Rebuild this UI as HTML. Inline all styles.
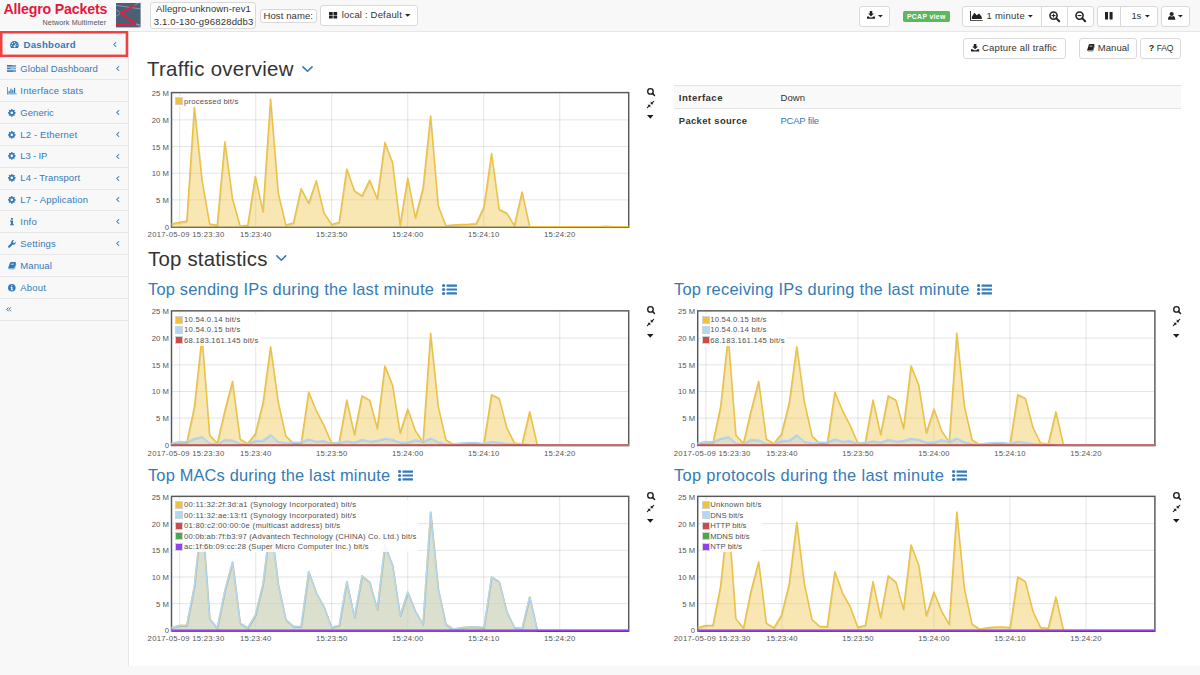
<!DOCTYPE html>
<html lang="en"><head><meta charset="utf-8"><title>Allegro Packets - Dashboard</title>
<style>
html,body{margin:0;padding:0}
body{width:1200px;height:675px;overflow:hidden;position:relative;background:#f8f8f8;font-family:"Liberation Sans", sans-serif;color:#333}
.bx,.ic,.t,.lgbg,.sw,#plots,.grp{position:absolute}
.grp{left:0;top:0;width:1200px;height:675px;display:block}
.bx{box-sizing:border-box}
.t{white-space:pre;font-family:"Liberation Sans", sans-serif}
.ic{display:block;overflow:visible}
.lgbg{background:#fff;opacity:.85}
.sw{width:8px;height:8px;box-sizing:border-box;border:1px solid #d2d2d2;background:#fff}
.sw i{display:block;width:6px;height:6px}
#plots{left:0;top:0}
</style></head>
<body>
<!-- page backgrounds -->
<div class="bx" style="left:0.00px;top:0.00px;width:1200.00px;height:31.00px;background:#f8f8f8;border-bottom:1px solid #e7e7e7;box-sizing:content-box"></div>
<div class="bx" style="left:128.30px;top:31.60px;width:1071.70px;height:634.10px;background:#fff;border-left:1px solid #e7e7e7"></div>
<!-- top navigation bar -->
<header id="topbar" class="grp">
<div class="bx" style="left:150.25px;top:2.25px;width:106.00px;height:26.75px;background:#fff;border:1px solid #d9d9d9;border-radius:3px"></div>
<div class="bx" style="left:260.40px;top:8.50px;width:56.20px;height:14.20px;background:#fff;border:1px solid #d9d9d9;border-radius:3px"></div>
<div class="bx" style="left:319.50px;top:5.40px;width:98.10px;height:20.40px;background:#fff;border:1px solid #d9d9d9;border-radius:3px"></div>
<div class="bx" style="left:858.75px;top:5.60px;width:31.50px;height:21.00px;background:#fff;border:1px solid #d9d9d9;border-radius:3px"></div>
<div class="bx" style="left:903.10px;top:10.60px;width:46.90px;height:11.90px;background:#5cb85c;border-radius:1.8px"></div>
<div class="bx" style="left:962.40px;top:5.60px;width:131.80px;height:21.00px;background:#fff;border:1px solid #d9d9d9;border-radius:3px"></div>
<div class="bx" style="left:1041.00px;top:5.60px;width:26.90px;height:21.00px;border-left:1px solid #d9d9d9;border-right:1px solid #d9d9d9"></div>
<div class="bx" style="left:1097.00px;top:5.60px;width:60.60px;height:21.00px;background:#fff;border:1px solid #d9d9d9;border-radius:3px"></div>
<div class="bx" style="left:1120.20px;top:5.60px;width:1.00px;height:21.00px;border-left:1px solid #d9d9d9"></div>
<div class="bx" style="left:1161.00px;top:5.60px;width:29.40px;height:21.00px;background:#fff;border:1px solid #d9d9d9;border-radius:3px"></div>
<svg class="ic" style="left:116.3px;top:2.9px" width="24.6" height="24.4" viewBox="0 0 24.6 24.4"><rect width="24.6" height="24.4" fill="#4b6075"/><g stroke="#c9d3db" stroke-width="0.55" fill="none" opacity=".85"><path d="M0 2.400L24.600 5.900"/><path d="M0 13.300L4.700 10.300 24.600-1.200"/><path d="M0 6.600L4.700 10.100"/><path d="M19.800 20.700L24.600 24"/><path d="M20 21L24.600 21.900"/></g><path d="M18.700 2.300L4.900 10.200 19.400 20.300" fill="none" stroke="#ea1c3c" stroke-width="1.900" stroke-linejoin="miter"/><path d="M0 21.400L19.600 20.500" fill="none" stroke="#ea1c3c" stroke-width="1.900"/></svg>
<svg class="ic" style="left:329.00px;top:12.00px;color:#222" width="8.20" height="6.40" viewBox="0 0 16 13" fill="#222" stroke="none" preserveAspectRatio="none"><rect x="0" y="0" width="7.300" height="5.900" rx=".6"/><rect x="8.700" y="0" width="7.300" height="5.900" rx=".6"/><rect x="0" y="7.100" width="7.300" height="5.900" rx=".6"/><rect x="8.700" y="7.100" width="7.300" height="5.900" rx=".6"/></svg>
<svg class="ic" style="left:404.60px;top:14.20px;color:#222" width="5.40" height="2.70" viewBox="0 0 16 9" fill="#222" stroke="none" preserveAspectRatio="none"><path d="M0 0h16L8 9z"/></svg>
<svg class="ic" style="left:866.50px;top:11.00px;color:#222" width="8.00" height="7.80" viewBox="0 0 16 15" fill="#222" stroke="none" preserveAspectRatio="none"><path d="M5.500 0h5v5h3.200L8 10.600 2.300 5h3.200z"/><path d="M0 10.400h3.600l2.200 2.100h4.400l2.200-2.100H16V15H0z"/></svg>
<svg class="ic" style="left:877.90px;top:15.00px;color:#222" width="4.80" height="2.60" viewBox="0 0 16 9" fill="#222" stroke="none" preserveAspectRatio="none"><path d="M0 0h16L8 9z"/></svg>
<svg class="ic" style="left:970.40px;top:11.00px;color:#222" width="12.70" height="9.80" viewBox="0 0 18 14" fill="#222" stroke="none" preserveAspectRatio="none"><path d="M0 0h1.300v12.700H18V14H0z"/><path d="M2.600 11.400V8.200L6.300 2.600l3.200 3.600 3.500-2.800 3.700 5v3z"/></svg>
<svg class="ic" style="left:1028.40px;top:15.00px;color:#222" width="4.80" height="2.60" viewBox="0 0 16 9" fill="#222" stroke="none" preserveAspectRatio="none"><path d="M0 0h16L8 9z"/></svg>
<svg class="ic" style="left:1048.90px;top:10.70px;color:#222" width="11.00" height="11.10" viewBox="0 0 16 16" fill="#222" stroke="none" preserveAspectRatio="none"><circle cx="6.600" cy="6.600" r="5.200" fill="none" stroke="currentColor" stroke-width="2.300"/><path d="M10.700 10.700L14.800 14.800" stroke="currentColor" stroke-width="2.800" stroke-linecap="round"/><rect x="3.800" y="5.800" width="5.600" height="1.600"/><rect x="5.800" y="3.800" width="1.600" height="5.600"/></svg>
<svg class="ic" style="left:1075.00px;top:10.70px;color:#222" width="11.00" height="11.10" viewBox="0 0 16 16" fill="#222" stroke="none" preserveAspectRatio="none"><circle cx="6.600" cy="6.600" r="5.200" fill="none" stroke="currentColor" stroke-width="2.300"/><path d="M10.700 10.700L14.800 14.800" stroke="currentColor" stroke-width="2.800" stroke-linecap="round"/><rect x="3.800" y="5.800" width="5.600" height="1.600"/></svg>
<svg class="ic" style="left:1105.20px;top:12.00px;color:#222" width="7.60" height="7.60" viewBox="0 0 12 13" fill="#222" stroke="none" preserveAspectRatio="none"><rect x="0" y="0" width="4.800" height="13" rx=".5"/><rect x="7.200" y="0" width="4.800" height="13" rx=".5"/></svg>
<svg class="ic" style="left:1144.50px;top:15.00px;color:#222" width="4.80" height="2.60" viewBox="0 0 16 9" fill="#222" stroke="none" preserveAspectRatio="none"><path d="M0 0h16L8 9z"/></svg>
<svg class="ic" style="left:1167.90px;top:11.80px;color:#222" width="7.30" height="7.80" viewBox="0 0 12 13" fill="#222" stroke="none" preserveAspectRatio="none"><circle cx="6" cy="3.400" r="3.400"/><path d="M0 13c0-4 1.500-6 3.600-6.300.700.600 1.500.900 2.400.900s1.700-.300 2.400-.900C10.500 7 12 9 12 13z"/></svg>
<svg class="ic" style="left:1178.00px;top:15.00px;color:#222" width="4.80" height="2.60" viewBox="0 0 16 9" fill="#222" stroke="none" preserveAspectRatio="none"><path d="M0 0h16L8 9z"/></svg>
<span class="t" style="left:3.50px;top:0.30px;font-size:14.2px;line-height:18.46px;font-weight:700;letter-spacing:-0.187px;color:#e2193f;">Allegro Packets</span>
<span class="t" style="left:42.50px;top:18.28px;font-size:7.2px;line-height:9.36px;letter-spacing:0.097px;color:#4a5563;">Network Multimeter</span>
<span class="t" style="left:156.00px;top:3.48px;font-size:9.5px;line-height:12.35px;letter-spacing:0.130px;">Allegro-unknown-rev1</span>
<span class="t" style="left:153.75px;top:15.73px;font-size:9.5px;line-height:12.35px;letter-spacing:0.180px;">3.1.0-130-g96828ddb3</span>
<span class="t" style="left:263.50px;top:9.78px;font-size:9.5px;line-height:12.35px;letter-spacing:0.102px;">Host name:</span>
<span class="t" style="left:341.70px;top:9.48px;font-size:9.5px;line-height:12.35px;letter-spacing:0.183px;">local : Default</span>
<span class="t" style="left:906.90px;top:12.80px;font-size:6.87px;line-height:8.93px;font-weight:700;letter-spacing:0.340px;color:#fff;">PCAP view</span>
<span class="t" style="left:986.50px;top:9.98px;font-size:9.5px;line-height:12.35px;letter-spacing:0.258px;">1 minute</span>
<span class="t" style="left:1131.50px;top:9.98px;font-size:9.5px;line-height:12.35px;letter-spacing:-0.217px;">1s</span>
</header>
<!-- sidebar navigation -->
<nav id="sidebar" class="grp">
<div class="bx" style="left:0.00px;top:79.20px;width:128.30px;height:1.00px;background:#e7e7e7"></div>
<div class="bx" style="left:0.00px;top:101.08px;width:128.30px;height:1.00px;background:#e7e7e7"></div>
<div class="bx" style="left:0.00px;top:122.95px;width:128.30px;height:1.00px;background:#e7e7e7"></div>
<div class="bx" style="left:0.00px;top:144.82px;width:128.30px;height:1.00px;background:#e7e7e7"></div>
<div class="bx" style="left:0.00px;top:166.70px;width:128.30px;height:1.00px;background:#e7e7e7"></div>
<div class="bx" style="left:0.00px;top:188.57px;width:128.30px;height:1.00px;background:#e7e7e7"></div>
<div class="bx" style="left:0.00px;top:210.45px;width:128.30px;height:1.00px;background:#e7e7e7"></div>
<div class="bx" style="left:0.00px;top:232.32px;width:128.30px;height:1.00px;background:#e7e7e7"></div>
<div class="bx" style="left:0.00px;top:254.20px;width:128.30px;height:1.00px;background:#e7e7e7"></div>
<div class="bx" style="left:0.00px;top:276.07px;width:128.30px;height:1.00px;background:#e7e7e7"></div>
<div class="bx" style="left:0.00px;top:297.95px;width:128.30px;height:1.00px;background:#e7e7e7"></div>
<div class="bx" style="left:0.00px;top:319.82px;width:128.30px;height:1.00px;background:#e7e7e7"></div>
<svg class="ic" style="left:0;top:31.4px" width="128.2" height="26.1" viewBox="0 0 128.2 26.1"><rect x="1.25" y="1.25" width="125.7" height="23.6" fill="#f8f8f8" stroke="#f04040" stroke-width="2.5"/></svg>
<svg class="ic" style="left:10.00px;top:41.20px;color:#337ab7" width="8.80" height="6.90" viewBox="0 0 16 13" fill="#337ab7" stroke="none" preserveAspectRatio="none"><path d="M8 0a8 8 0 0 1 8 8c0 1.7-.5 3.2-1.4 4.5a1 1 0 0 1-.8.5H2.2a1 1 0 0 1-.8-.5A8 8 0 0 1 8 0z"/><g fill="#f8f8f8"><circle cx="3" cy="8" r="1.1"/><circle cx="4.5" cy="4.5" r="1.1"/><circle cx="8" cy="3" r="1.1"/><circle cx="13" cy="8" r="1.1"/><path d="M10.9 3.6l1 .5-2.3 4.6a1.9 1.9 0 1 1-1.1-.5z"/></g></svg>
<svg class="ic" style="left:113.20px;top:42.40px;color:#337ab7" width="3.60" height="5.00" viewBox="0 0 7 12" fill="#337ab7" stroke="none" preserveAspectRatio="none"><path d="M5.6 1.2L1.4 6l4.2 4.8" fill="none" stroke="currentColor" stroke-width="2.1" stroke-linecap="round" stroke-linejoin="round"/></svg>
<svg class="ic" style="left:7.30px;top:65.30px;color:#337ab7" width="8.80" height="6.90" viewBox="0 0 16 13" fill="#337ab7" stroke="none" preserveAspectRatio="none"><rect x="0" y="0" width="16" height="3.2"/><rect x="0" y="4.9" width="16" height="3.2"/><rect x="0" y="9.8" width="16" height="3.2"/><g fill="#f8f8f8" opacity=".75"><rect x="9" y="1" width="6" height="1.2"/><rect x="6" y="5.9" width="9" height="1.2"/><rect x="11" y="10.8" width="4" height="1.2"/></g></svg>
<svg class="ic" style="left:115.70px;top:66.20px;color:#337ab7" width="3.60" height="5.00" viewBox="0 0 7 12" fill="#337ab7" stroke="none" preserveAspectRatio="none"><path d="M5.6 1.2L1.4 6l4.2 4.8" fill="none" stroke="currentColor" stroke-width="2.1" stroke-linecap="round" stroke-linejoin="round"/></svg>
<svg class="ic" style="left:6.90px;top:86.98px;color:#337ab7" width="9.60" height="7.20" viewBox="0 0 16 13" fill="#337ab7" stroke="none" preserveAspectRatio="none"><path d="M0 0h1.2v11.8H16V13H0z"/><rect x="2.6" y="7" width="2" height="4"/><rect x="5.6" y="3" width="2" height="8"/><rect x="8.6" y="5.2" width="2" height="5.8"/><rect x="11.6" y="1.5" width="2" height="9.5"/></svg>
<svg class="ic" style="left:7.90px;top:108.65px;color:#337ab7" width="7.60" height="7.60" viewBox="0 0 16 16" fill="#337ab7" stroke="none" preserveAspectRatio="none"><path fill-rule="evenodd" d="M6.7 0h2.6l.4 2.1 1.3.55 1.8-1.2 1.85 1.85-1.2 1.8.55 1.3 2.1.4v2.6l-2.1.4-.55 1.3 1.2 1.8-1.85 1.85-1.8-1.2-1.3.55-.4 2.1H6.7l-.4-2.1-1.3-.55-1.8 1.2-1.85-1.85 1.2-1.8-.55-1.3L0 9.3V6.7l2.1-.4.55-1.3-1.2-1.8L3.3 1.35l1.8 1.2 1.3-.55zM8 5.2a2.8 2.8 0 1 0 0 5.6 2.8 2.8 0 0 0 0-5.6z"/></svg>
<svg class="ic" style="left:115.70px;top:109.95px;color:#337ab7" width="3.60" height="5.00" viewBox="0 0 7 12" fill="#337ab7" stroke="none" preserveAspectRatio="none"><path d="M5.6 1.2L1.4 6l4.2 4.8" fill="none" stroke="currentColor" stroke-width="2.1" stroke-linecap="round" stroke-linejoin="round"/></svg>
<svg class="ic" style="left:7.90px;top:130.52px;color:#337ab7" width="7.60" height="7.60" viewBox="0 0 16 16" fill="#337ab7" stroke="none" preserveAspectRatio="none"><path fill-rule="evenodd" d="M6.7 0h2.6l.4 2.1 1.3.55 1.8-1.2 1.85 1.85-1.2 1.8.55 1.3 2.1.4v2.6l-2.1.4-.55 1.3 1.2 1.8-1.85 1.85-1.8-1.2-1.3.55-.4 2.1H6.7l-.4-2.1-1.3-.55-1.8 1.2-1.85-1.85 1.2-1.8-.55-1.3L0 9.3V6.7l2.1-.4.55-1.3-1.2-1.8L3.3 1.35l1.8 1.2 1.3-.55zM8 5.2a2.8 2.8 0 1 0 0 5.6 2.8 2.8 0 0 0 0-5.6z"/></svg>
<svg class="ic" style="left:115.70px;top:131.82px;color:#337ab7" width="3.60" height="5.00" viewBox="0 0 7 12" fill="#337ab7" stroke="none" preserveAspectRatio="none"><path d="M5.6 1.2L1.4 6l4.2 4.8" fill="none" stroke="currentColor" stroke-width="2.1" stroke-linecap="round" stroke-linejoin="round"/></svg>
<svg class="ic" style="left:7.90px;top:152.40px;color:#337ab7" width="7.60" height="7.60" viewBox="0 0 16 16" fill="#337ab7" stroke="none" preserveAspectRatio="none"><path fill-rule="evenodd" d="M6.7 0h2.6l.4 2.1 1.3.55 1.8-1.2 1.85 1.85-1.2 1.8.55 1.3 2.1.4v2.6l-2.1.4-.55 1.3 1.2 1.8-1.85 1.85-1.8-1.2-1.3.55-.4 2.1H6.7l-.4-2.1-1.3-.55-1.8 1.2-1.85-1.85 1.2-1.8-.55-1.3L0 9.3V6.7l2.1-.4.55-1.3-1.2-1.8L3.3 1.35l1.8 1.2 1.3-.55zM8 5.2a2.8 2.8 0 1 0 0 5.6 2.8 2.8 0 0 0 0-5.6z"/></svg>
<svg class="ic" style="left:115.70px;top:153.70px;color:#337ab7" width="3.60" height="5.00" viewBox="0 0 7 12" fill="#337ab7" stroke="none" preserveAspectRatio="none"><path d="M5.6 1.2L1.4 6l4.2 4.8" fill="none" stroke="currentColor" stroke-width="2.1" stroke-linecap="round" stroke-linejoin="round"/></svg>
<svg class="ic" style="left:7.90px;top:174.27px;color:#337ab7" width="7.60" height="7.60" viewBox="0 0 16 16" fill="#337ab7" stroke="none" preserveAspectRatio="none"><path fill-rule="evenodd" d="M6.7 0h2.6l.4 2.1 1.3.55 1.8-1.2 1.85 1.85-1.2 1.8.55 1.3 2.1.4v2.6l-2.1.4-.55 1.3 1.2 1.8-1.85 1.85-1.8-1.2-1.3.55-.4 2.1H6.7l-.4-2.1-1.3-.55-1.8 1.2-1.85-1.85 1.2-1.8-.55-1.3L0 9.3V6.7l2.1-.4.55-1.3-1.2-1.8L3.3 1.35l1.8 1.2 1.3-.55zM8 5.2a2.8 2.8 0 1 0 0 5.6 2.8 2.8 0 0 0 0-5.6z"/></svg>
<svg class="ic" style="left:115.70px;top:175.57px;color:#337ab7" width="3.60" height="5.00" viewBox="0 0 7 12" fill="#337ab7" stroke="none" preserveAspectRatio="none"><path d="M5.6 1.2L1.4 6l4.2 4.8" fill="none" stroke="currentColor" stroke-width="2.1" stroke-linecap="round" stroke-linejoin="round"/></svg>
<svg class="ic" style="left:7.90px;top:196.15px;color:#337ab7" width="7.60" height="7.60" viewBox="0 0 16 16" fill="#337ab7" stroke="none" preserveAspectRatio="none"><path fill-rule="evenodd" d="M6.7 0h2.6l.4 2.1 1.3.55 1.8-1.2 1.85 1.85-1.2 1.8.55 1.3 2.1.4v2.6l-2.1.4-.55 1.3 1.2 1.8-1.85 1.85-1.8-1.2-1.3.55-.4 2.1H6.7l-.4-2.1-1.3-.55-1.8 1.2-1.85-1.85 1.2-1.8-.55-1.3L0 9.3V6.7l2.1-.4.55-1.3-1.2-1.8L3.3 1.35l1.8 1.2 1.3-.55zM8 5.2a2.8 2.8 0 1 0 0 5.6 2.8 2.8 0 0 0 0-5.6z"/></svg>
<svg class="ic" style="left:115.70px;top:197.45px;color:#337ab7" width="3.60" height="5.00" viewBox="0 0 7 12" fill="#337ab7" stroke="none" preserveAspectRatio="none"><path d="M5.6 1.2L1.4 6l4.2 4.8" fill="none" stroke="currentColor" stroke-width="2.1" stroke-linecap="round" stroke-linejoin="round"/></svg>
<svg class="ic" style="left:9.80px;top:218.12px;color:#337ab7" width="3.90" height="7.30" viewBox="0 0 6 14" fill="#337ab7" stroke="none" preserveAspectRatio="none"><rect x="1.4" y="0" width="3.2" height="3.2"/><path d="M0 5h4.6v6.8H6V14H0v-2.2h1.4V7.2H0z"/></svg>
<svg class="ic" style="left:115.70px;top:219.32px;color:#337ab7" width="3.60" height="5.00" viewBox="0 0 7 12" fill="#337ab7" stroke="none" preserveAspectRatio="none"><path d="M5.6 1.2L1.4 6l4.2 4.8" fill="none" stroke="currentColor" stroke-width="2.1" stroke-linecap="round" stroke-linejoin="round"/></svg>
<svg class="ic" style="left:7.70px;top:239.90px;color:#337ab7" width="7.80" height="7.80" viewBox="0 0 16 16" fill="#337ab7" stroke="none" preserveAspectRatio="none"><path d="M15.6 3.3l-2.7 2.7-2.3-.6-.6-2.3L12.7.4a4.6 4.6 0 0 0-6 5.8L.6 12.3a2.2 2.2 0 0 0 3.1 3.1l6.1-6.1a4.6 4.6 0 0 0 5.8-6z"/></svg>
<svg class="ic" style="left:115.70px;top:241.20px;color:#337ab7" width="3.60" height="5.00" viewBox="0 0 7 12" fill="#337ab7" stroke="none" preserveAspectRatio="none"><path d="M5.6 1.2L1.4 6l4.2 4.8" fill="none" stroke="currentColor" stroke-width="2.1" stroke-linecap="round" stroke-linejoin="round"/></svg>
<svg class="ic" style="left:7.60px;top:261.97px;color:#337ab7" width="8.20" height="7.20" viewBox="0 0 16 14" fill="#337ab7" stroke="none" preserveAspectRatio="none"><path d="M15.7 3.4c.3.4.4.9.2 1.4l-2.6 8.1c-.2.7-.9 1.1-1.6 1.1H3c-1 0-2-.8-2.4-1.800-.2-.5-.2-.9 0-1.300L3.300 2.700C3.600 1.500 4.600 0 5.800 0h8.300c.5 0 .9.200 1.100.500.300.400.300.900.200 1.400l-2.800 8.900c-.2.500-.5.700-1 .700H2.600c-.300 0-.500.100-.400.500.200.700.800.800 1.300.800h8.400c.300 0 .600-.200.700-.500l2.700-8.700c.1-.100.100-.300.100-.500.100.100.200.200.300.300z"/><g fill="#f8f8f8"><path d="M6.200 3.200h5.800l-.250.850H5.950zM5.650 5h5.800l-.250.850H5.400z"/></g></svg>
<svg class="ic" style="left:7.90px;top:283.65px;color:#337ab7" width="7.60" height="7.60" viewBox="0 0 16 16" fill="#337ab7" stroke="none" preserveAspectRatio="none"><circle cx="8" cy="8" r="8"/><g fill="#f8f8f8"><rect x="6.7" y="2.6" width="2.6" height="2.4"/><path d="M5.600 6.400h3.700v5h1.100v1.800H5.600v-1.800h1.100V8.200H5.600z"/></g></svg>
<svg class="ic" style="left:6.20px;top:306.90px;color:#337ab7" width="5.40" height="4.60" viewBox="0 0 14 12" fill="#337ab7" stroke="none" preserveAspectRatio="none"><path d="M6 1.5L2 6l4 4.5M12 1.5L8 6l4 4.5" fill="none" stroke="currentColor" stroke-width="2.5" stroke-linecap="round" stroke-linejoin="round"/></svg>
<span class="t" style="left:23.50px;top:38.98px;font-size:9.6px;line-height:12.48px;font-weight:700;letter-spacing:0.262px;color:#337ab7;">Dashboard</span>
<span class="t" style="left:20.30px;top:62.98px;font-size:9.5px;line-height:12.35px;letter-spacing:0.064px;color:#337ab7;">Global Dashboard</span>
<span class="t" style="left:20.30px;top:84.86px;font-size:9.5px;line-height:12.35px;letter-spacing:0.229px;color:#337ab7;">Interface stats</span>
<span class="t" style="left:20.30px;top:106.73px;font-size:9.5px;line-height:12.35px;letter-spacing:0.048px;color:#337ab7;">Generic</span>
<span class="t" style="left:20.30px;top:128.61px;font-size:9.5px;line-height:12.35px;letter-spacing:0.152px;color:#337ab7;">L2 - Ethernet</span>
<span class="t" style="left:20.30px;top:150.48px;font-size:9.5px;line-height:12.35px;letter-spacing:-0.141px;color:#337ab7;">L3 - IP</span>
<span class="t" style="left:20.30px;top:172.36px;font-size:9.5px;line-height:12.35px;letter-spacing:0.047px;color:#337ab7;">L4 - Transport</span>
<span class="t" style="left:20.30px;top:194.23px;font-size:9.5px;line-height:12.35px;letter-spacing:0.184px;color:#337ab7;">L7 - Application</span>
<span class="t" style="left:20.30px;top:216.11px;font-size:9.5px;line-height:12.35px;letter-spacing:0.189px;color:#337ab7;">Info</span>
<span class="t" style="left:20.30px;top:237.98px;font-size:9.5px;line-height:12.35px;letter-spacing:0.172px;color:#337ab7;">Settings</span>
<span class="t" style="left:20.30px;top:259.86px;font-size:9.5px;line-height:12.35px;letter-spacing:0.074px;color:#337ab7;">Manual</span>
<span class="t" style="left:20.30px;top:281.73px;font-size:9.5px;line-height:12.35px;letter-spacing:0.195px;color:#337ab7;">About</span>
</nav>
<!-- dashboard content: buttons, info table, headings, charts -->
<main id="page" class="grp">
<div class="bx" style="left:962.50px;top:37.50px;width:103.00px;height:21.00px;background:#fff;border:1px solid #d9d9d9;border-radius:3px"></div>
<div class="bx" style="left:1078.75px;top:37.50px;width:58.50px;height:21.00px;background:#fff;border:1px solid #d9d9d9;border-radius:3px"></div>
<div class="bx" style="left:1140.25px;top:37.50px;width:41.00px;height:21.00px;background:#fff;border:1px solid #d9d9d9;border-radius:3px"></div>
<div class="bx" style="left:673.75px;top:85.30px;width:507.50px;height:1.00px;background:#e3e3e3"></div>
<div class="bx" style="left:673.75px;top:86.20px;width:507.50px;height:22.50px;background:#f9f9f9"></div>
<div class="bx" style="left:673.75px;top:108.40px;width:507.50px;height:1.00px;background:#e3e3e3"></div>
<svg id="plots" width="1200" height="675" viewBox="0 0 1200 675">
<rect x="171.50" y="92.60" width="457.20" height="134.60" fill="#fff"/>
<line x1="179.75" y1="92.60" x2="179.75" y2="227.20" stroke="#545454" stroke-opacity="0.22" stroke-width="0.7"/>
<line x1="255.75" y1="92.60" x2="255.75" y2="227.20" stroke="#545454" stroke-opacity="0.22" stroke-width="0.7"/>
<line x1="331.75" y1="92.60" x2="331.75" y2="227.20" stroke="#545454" stroke-opacity="0.22" stroke-width="0.7"/>
<line x1="407.75" y1="92.60" x2="407.75" y2="227.20" stroke="#545454" stroke-opacity="0.22" stroke-width="0.7"/>
<line x1="483.75" y1="92.60" x2="483.75" y2="227.20" stroke="#545454" stroke-opacity="0.22" stroke-width="0.7"/>
<line x1="559.75" y1="92.60" x2="559.75" y2="227.20" stroke="#545454" stroke-opacity="0.22" stroke-width="0.7"/>
<line x1="171.50" y1="199.92" x2="628.70" y2="199.92" stroke="#545454" stroke-opacity="0.22" stroke-width="0.7"/>
<line x1="171.50" y1="173.24" x2="628.70" y2="173.24" stroke="#545454" stroke-opacity="0.22" stroke-width="0.7"/>
<line x1="171.50" y1="146.56" x2="628.70" y2="146.56" stroke="#545454" stroke-opacity="0.22" stroke-width="0.7"/>
<line x1="171.50" y1="119.88" x2="628.70" y2="119.88" stroke="#545454" stroke-opacity="0.22" stroke-width="0.7"/>
<rect x="171.50" y="92.60" width="457.20" height="134.60" fill="none" stroke="#585858" stroke-width="1.45"/>
<clipPath id="cl171_92"><rect x="170.70" y="91.60" width="458.80" height="136.80"/></clipPath>
<g clip-path="url(#cl171_92)">
<polygon points="171.50,227.20 171.50,223.93 179.12,222.33 186.74,221.26 194.36,107.07 201.98,180.18 209.60,223.93 217.22,225.27 224.84,141.76 232.46,198.85 240.08,226.07 247.70,225.27 255.32,176.44 262.94,211.66 270.56,99.07 278.18,192.98 285.80,225.00 293.42,222.86 301.04,188.71 308.66,203.12 316.28,180.71 323.90,212.73 331.52,224.47 339.14,222.33 346.76,168.97 354.38,190.85 362.00,195.92 369.62,180.18 377.24,198.85 384.86,142.56 392.48,162.57 400.10,225.00 407.72,178.04 415.34,217.80 422.96,188.71 430.58,115.88 438.20,205.79 445.82,225.80 453.44,225.00 461.06,224.47 468.68,224.20 476.30,223.67 483.92,206.86 491.54,153.50 499.16,209.52 506.78,213.26 514.40,225.53 522.02,191.92 529.64,226.60 537.26,226.60 544.88,226.60 552.50,226.60 560.12,226.60 567.74,226.60 575.36,226.60 582.98,226.60 590.60,226.60 598.22,226.60 605.84,226.28 613.46,226.60 621.08,226.60 628.70,226.60 628.70,227.20" fill="#edc240" fill-opacity="0.4"/>
<polyline points="172.00,224.83 179.62,223.23 187.24,222.16 194.86,107.97 202.48,181.08 210.10,224.83 217.72,226.17 225.34,142.66 232.96,199.75 240.58,226.97 248.20,226.17 255.82,177.34 263.44,212.56 271.06,99.97 278.68,193.88 286.30,225.90 293.92,223.76 301.54,189.61 309.16,204.02 316.78,181.61 324.40,213.63 332.02,225.37 339.64,223.23 347.26,169.87 354.88,191.75 362.50,196.82 370.12,181.08 377.74,199.75 385.36,143.46 392.98,163.47 400.60,225.90 408.22,178.94 415.84,218.70 423.46,189.61 431.08,116.78 438.70,206.69 446.32,226.70 453.94,225.90 461.56,225.37 469.18,225.10 476.80,224.57 484.42,207.76 492.04,154.40 499.66,210.42 507.28,214.16 514.90,226.43 522.52,192.82 530.14,227.50 537.76,227.50 545.38,227.50 553.00,227.50 560.62,227.50 568.24,227.50 575.86,227.50 583.48,227.50 591.10,227.50 598.72,227.50 606.34,227.18 613.96,227.50 621.58,227.50 629.20,227.50" fill="none" stroke="#000" stroke-opacity="0.10" stroke-width="1.45" stroke-linejoin="round"/>
<polyline points="171.50,223.93 179.12,222.33 186.74,221.26 194.36,107.07 201.98,180.18 209.60,223.93 217.22,225.27 224.84,141.76 232.46,198.85 240.08,226.07 247.70,225.27 255.32,176.44 262.94,211.66 270.56,99.07 278.18,192.98 285.80,225.00 293.42,222.86 301.04,188.71 308.66,203.12 316.28,180.71 323.90,212.73 331.52,224.47 339.14,222.33 346.76,168.97 354.38,190.85 362.00,195.92 369.62,180.18 377.24,198.85 384.86,142.56 392.48,162.57 400.10,225.00 407.72,178.04 415.34,217.80 422.96,188.71 430.58,115.88 438.20,205.79 445.82,225.80 453.44,225.00 461.06,224.47 468.68,224.20 476.30,223.67 483.92,206.86 491.54,153.50 499.16,209.52 506.78,213.26 514.40,225.53 522.02,191.92 529.64,226.60 537.26,226.60 544.88,226.60 552.50,226.60 560.12,226.60 567.74,226.60 575.36,226.60 582.98,226.60 590.60,226.60 598.22,226.60 605.84,226.28 613.46,226.60 621.08,226.60 628.70,226.60" fill="none" stroke="#edc240" stroke-width="1.45" stroke-linejoin="round"/>
</g>
<rect x="171.50" y="310.85" width="457.20" height="134.60" fill="#fff"/>
<line x1="179.75" y1="310.85" x2="179.75" y2="445.45" stroke="#545454" stroke-opacity="0.22" stroke-width="0.7"/>
<line x1="255.75" y1="310.85" x2="255.75" y2="445.45" stroke="#545454" stroke-opacity="0.22" stroke-width="0.7"/>
<line x1="331.75" y1="310.85" x2="331.75" y2="445.45" stroke="#545454" stroke-opacity="0.22" stroke-width="0.7"/>
<line x1="407.75" y1="310.85" x2="407.75" y2="445.45" stroke="#545454" stroke-opacity="0.22" stroke-width="0.7"/>
<line x1="483.75" y1="310.85" x2="483.75" y2="445.45" stroke="#545454" stroke-opacity="0.22" stroke-width="0.7"/>
<line x1="559.75" y1="310.85" x2="559.75" y2="445.45" stroke="#545454" stroke-opacity="0.22" stroke-width="0.7"/>
<line x1="171.50" y1="418.17" x2="628.70" y2="418.17" stroke="#545454" stroke-opacity="0.22" stroke-width="0.7"/>
<line x1="171.50" y1="391.49" x2="628.70" y2="391.49" stroke="#545454" stroke-opacity="0.22" stroke-width="0.7"/>
<line x1="171.50" y1="364.81" x2="628.70" y2="364.81" stroke="#545454" stroke-opacity="0.22" stroke-width="0.7"/>
<line x1="171.50" y1="338.13" x2="628.70" y2="338.13" stroke="#545454" stroke-opacity="0.22" stroke-width="0.7"/>
<rect x="171.50" y="310.85" width="457.20" height="134.60" fill="none" stroke="#585858" stroke-width="1.45"/>
<clipPath id="cl171_310"><rect x="170.70" y="309.85" width="458.80" height="136.80"/></clipPath>
<g clip-path="url(#cl171_310)">
<polygon points="171.50,445.45 171.50,443.78 179.12,443.36 186.74,442.98 194.36,406.96 201.98,336.53 209.60,434.98 217.22,443.36 224.84,410.70 232.46,381.35 240.08,439.14 247.70,443.52 255.32,433.86 262.94,403.23 270.56,346.67 278.18,402.16 285.80,435.94 293.42,443.36 301.04,444.05 308.66,392.02 316.28,410.70 323.90,425.37 331.52,442.98 339.14,442.18 346.76,400.03 354.38,434.44 362.00,395.76 369.62,400.03 377.24,428.31 384.86,365.88 392.48,385.09 400.10,432.79 407.72,409.10 415.34,430.66 422.96,442.18 430.58,333.33 438.20,406.43 445.82,439.78 453.44,444.42 461.06,444.05 468.68,443.78 476.30,443.78 483.92,443.36 491.54,394.69 499.16,398.43 506.78,427.77 514.40,442.98 522.02,444.05 529.64,411.77 537.26,444.85 544.88,444.85 552.50,444.85 560.12,444.85 567.74,444.85 575.36,444.85 582.98,444.85 590.60,444.85 598.22,444.85 605.84,444.85 613.46,444.85 621.08,444.85 628.70,444.85 628.70,445.45" fill="#edc240" fill-opacity="0.4"/>
<polyline points="172.00,444.68 179.62,444.26 187.24,443.88 194.86,407.86 202.48,337.43 210.10,435.88 217.72,444.26 225.34,411.60 232.96,382.25 240.58,440.04 248.20,444.42 255.82,434.76 263.44,404.13 271.06,347.57 278.68,403.06 286.30,436.84 293.92,444.26 301.54,444.95 309.16,392.92 316.78,411.60 324.40,426.27 332.02,443.88 339.64,443.08 347.26,400.93 354.88,435.34 362.50,396.66 370.12,400.93 377.74,429.21 385.36,366.78 392.98,385.99 400.60,433.69 408.22,410.00 415.84,431.56 423.46,443.08 431.08,334.23 438.70,407.33 446.32,440.68 453.94,445.32 461.56,444.95 469.18,444.68 476.80,444.68 484.42,444.26 492.04,395.59 499.66,399.33 507.28,428.67 514.90,443.88 522.52,444.95 530.14,412.67 537.76,445.75 545.38,445.75 553.00,445.75 560.62,445.75 568.24,445.75 575.86,445.75 583.48,445.75 591.10,445.75 598.72,445.75 606.34,445.75 613.96,445.75 621.58,445.75 629.20,445.75" fill="none" stroke="#000" stroke-opacity="0.10" stroke-width="1.45" stroke-linejoin="round"/>
<polyline points="171.50,443.78 179.12,443.36 186.74,442.98 194.36,406.96 201.98,336.53 209.60,434.98 217.22,443.36 224.84,410.70 232.46,381.35 240.08,439.14 247.70,443.52 255.32,433.86 262.94,403.23 270.56,346.67 278.18,402.16 285.80,435.94 293.42,443.36 301.04,444.05 308.66,392.02 316.28,410.70 323.90,425.37 331.52,442.98 339.14,442.18 346.76,400.03 354.38,434.44 362.00,395.76 369.62,400.03 377.24,428.31 384.86,365.88 392.48,385.09 400.10,432.79 407.72,409.10 415.34,430.66 422.96,442.18 430.58,333.33 438.20,406.43 445.82,439.78 453.44,444.42 461.06,444.05 468.68,443.78 476.30,443.78 483.92,443.36 491.54,394.69 499.16,398.43 506.78,427.77 514.40,442.98 522.02,444.05 529.64,411.77 537.26,444.85 544.88,444.85 552.50,444.85 560.12,444.85 567.74,444.85 575.36,444.85 582.98,444.85 590.60,444.85 598.22,444.85 605.84,444.85 613.46,444.85 621.08,444.85 628.70,444.85" fill="none" stroke="#edc240" stroke-width="1.45" stroke-linejoin="round"/>
<polygon points="171.50,445.45 171.50,443.25 179.12,441.49 186.74,441.65 194.36,438.45 201.98,436.58 209.60,442.98 217.22,444.05 224.84,439.35 232.46,440.05 240.08,443.36 247.70,443.78 255.32,440.58 262.94,440.21 270.56,434.87 278.18,441.49 285.80,442.98 293.42,442.29 301.04,441.92 308.66,438.98 316.28,441.49 323.90,440.58 331.52,443.57 339.14,442.50 346.76,440.85 354.38,442.29 362.00,439.35 369.62,441.27 377.24,440.42 384.86,438.45 392.48,439.35 400.10,442.29 407.72,442.29 415.34,439.78 422.96,441.49 430.58,438.07 438.20,441.92 445.82,443.78 453.44,444.05 461.06,442.98 468.68,442.50 476.30,442.50 483.92,443.57 491.54,441.49 499.16,442.50 506.78,443.36 514.40,443.78 522.02,443.78 529.64,444.42 537.26,444.85 544.88,444.85 552.50,444.85 560.12,444.85 567.74,444.85 575.36,444.85 582.98,444.85 590.60,444.85 598.22,444.85 605.84,444.85 613.46,444.85 621.08,444.85 628.70,444.85 628.70,445.45" fill="#afd8f8" fill-opacity="0.4"/>
<polyline points="172.00,444.15 179.62,442.39 187.24,442.55 194.86,439.35 202.48,437.48 210.10,443.88 217.72,444.95 225.34,440.25 232.96,440.95 240.58,444.26 248.20,444.68 255.82,441.48 263.44,441.11 271.06,435.77 278.68,442.39 286.30,443.88 293.92,443.19 301.54,442.82 309.16,439.88 316.78,442.39 324.40,441.48 332.02,444.47 339.64,443.40 347.26,441.75 354.88,443.19 362.50,440.25 370.12,442.17 377.74,441.32 385.36,439.35 392.98,440.25 400.60,443.19 408.22,443.19 415.84,440.68 423.46,442.39 431.08,438.97 438.70,442.82 446.32,444.68 453.94,444.95 461.56,443.88 469.18,443.40 476.80,443.40 484.42,444.47 492.04,442.39 499.66,443.40 507.28,444.26 514.90,444.68 522.52,444.68 530.14,445.32 537.76,445.75 545.38,445.75 553.00,445.75 560.62,445.75 568.24,445.75 575.86,445.75 583.48,445.75 591.10,445.75 598.72,445.75 606.34,445.75 613.96,445.75 621.58,445.75 629.20,445.75" fill="none" stroke="#000" stroke-opacity="0.10" stroke-width="1.45" stroke-linejoin="round"/>
<polyline points="171.50,443.25 179.12,441.49 186.74,441.65 194.36,438.45 201.98,436.58 209.60,442.98 217.22,444.05 224.84,439.35 232.46,440.05 240.08,443.36 247.70,443.78 255.32,440.58 262.94,440.21 270.56,434.87 278.18,441.49 285.80,442.98 293.42,442.29 301.04,441.92 308.66,438.98 316.28,441.49 323.90,440.58 331.52,443.57 339.14,442.50 346.76,440.85 354.38,442.29 362.00,439.35 369.62,441.27 377.24,440.42 384.86,438.45 392.48,439.35 400.10,442.29 407.72,442.29 415.34,439.78 422.96,441.49 430.58,438.07 438.20,441.92 445.82,443.78 453.44,444.05 461.06,442.98 468.68,442.50 476.30,442.50 483.92,443.57 491.54,441.49 499.16,442.50 506.78,443.36 514.40,443.78 522.02,443.78 529.64,444.42 537.26,444.85 544.88,444.85 552.50,444.85 560.12,444.85 567.74,444.85 575.36,444.85 582.98,444.85 590.60,444.85 598.22,444.85 605.84,444.85 613.46,444.85 621.08,444.85 628.70,444.85" fill="none" stroke="#afd8f8" stroke-width="1.45" stroke-linejoin="round"/>
<polyline points="172.00,445.75 179.62,445.75 187.24,445.75 194.86,445.75 202.48,445.75 210.10,445.75 217.72,445.75 225.34,445.75 232.96,445.75 240.58,445.75 248.20,445.75 255.82,445.75 263.44,445.75 271.06,445.75 278.68,445.75 286.30,445.75 293.92,445.75 301.54,445.75 309.16,445.75 316.78,445.75 324.40,445.75 332.02,445.75 339.64,445.75 347.26,445.75 354.88,445.75 362.50,445.75 370.12,445.75 377.74,445.75 385.36,445.75 392.98,445.75 400.60,445.75 408.22,445.75 415.84,445.75 423.46,445.75 431.08,445.75 438.70,445.75 446.32,445.75 453.94,445.75 461.56,445.75 469.18,445.75 476.80,445.75 484.42,445.75 492.04,445.75 499.66,445.75 507.28,445.75 514.90,445.75 522.52,445.75 530.14,445.75 537.76,445.75 545.38,445.75 553.00,445.75 560.62,445.75 568.24,445.75 575.86,445.75 583.48,445.75 591.10,445.75 598.72,445.75 606.34,445.75 613.96,445.75 621.58,445.75 629.20,445.75" fill="none" stroke="#000" stroke-opacity="0.10" stroke-width="1.45" stroke-linejoin="round"/>
<polyline points="171.50,444.85 179.12,444.85 186.74,444.85 194.36,444.85 201.98,444.85 209.60,444.85 217.22,444.85 224.84,444.85 232.46,444.85 240.08,444.85 247.70,444.85 255.32,444.85 262.94,444.85 270.56,444.85 278.18,444.85 285.80,444.85 293.42,444.85 301.04,444.85 308.66,444.85 316.28,444.85 323.90,444.85 331.52,444.85 339.14,444.85 346.76,444.85 354.38,444.85 362.00,444.85 369.62,444.85 377.24,444.85 384.86,444.85 392.48,444.85 400.10,444.85 407.72,444.85 415.34,444.85 422.96,444.85 430.58,444.85 438.20,444.85 445.82,444.85 453.44,444.85 461.06,444.85 468.68,444.85 476.30,444.85 483.92,444.85 491.54,444.85 499.16,444.85 506.78,444.85 514.40,444.85 522.02,444.85 529.64,444.85 537.26,444.85 544.88,444.85 552.50,444.85 560.12,444.85 567.74,444.85 575.36,444.85 582.98,444.85 590.60,444.85 598.22,444.85 605.84,444.85 613.46,444.85 621.08,444.85 628.70,444.85" fill="none" stroke="#cb4b4b" stroke-width="1.45" stroke-linejoin="round"/>
</g>
<rect x="697.70" y="310.85" width="457.20" height="134.60" fill="#fff"/>
<line x1="705.95" y1="310.85" x2="705.95" y2="445.45" stroke="#545454" stroke-opacity="0.22" stroke-width="0.7"/>
<line x1="781.95" y1="310.85" x2="781.95" y2="445.45" stroke="#545454" stroke-opacity="0.22" stroke-width="0.7"/>
<line x1="857.95" y1="310.85" x2="857.95" y2="445.45" stroke="#545454" stroke-opacity="0.22" stroke-width="0.7"/>
<line x1="933.95" y1="310.85" x2="933.95" y2="445.45" stroke="#545454" stroke-opacity="0.22" stroke-width="0.7"/>
<line x1="1009.95" y1="310.85" x2="1009.95" y2="445.45" stroke="#545454" stroke-opacity="0.22" stroke-width="0.7"/>
<line x1="1085.95" y1="310.85" x2="1085.95" y2="445.45" stroke="#545454" stroke-opacity="0.22" stroke-width="0.7"/>
<line x1="697.70" y1="418.17" x2="1154.90" y2="418.17" stroke="#545454" stroke-opacity="0.22" stroke-width="0.7"/>
<line x1="697.70" y1="391.49" x2="1154.90" y2="391.49" stroke="#545454" stroke-opacity="0.22" stroke-width="0.7"/>
<line x1="697.70" y1="364.81" x2="1154.90" y2="364.81" stroke="#545454" stroke-opacity="0.22" stroke-width="0.7"/>
<line x1="697.70" y1="338.13" x2="1154.90" y2="338.13" stroke="#545454" stroke-opacity="0.22" stroke-width="0.7"/>
<rect x="697.70" y="310.85" width="457.20" height="134.60" fill="none" stroke="#585858" stroke-width="1.45"/>
<clipPath id="cl697_310"><rect x="696.90" y="309.85" width="458.80" height="136.80"/></clipPath>
<g clip-path="url(#cl697_310)">
<polygon points="697.70,445.45 697.70,443.78 705.32,443.36 712.94,442.98 720.56,406.96 728.18,336.53 735.80,434.98 743.42,443.36 751.04,410.70 758.66,381.35 766.28,439.14 773.90,443.52 781.52,433.86 789.14,403.23 796.76,346.67 804.38,402.16 812.00,435.94 819.62,443.36 827.24,444.05 834.86,392.02 842.48,410.70 850.10,425.37 857.72,442.98 865.34,442.18 872.96,400.03 880.58,434.44 888.20,395.76 895.82,400.03 903.44,428.31 911.06,365.88 918.68,385.09 926.30,432.79 933.92,409.10 941.54,430.66 949.16,442.18 956.78,333.33 964.40,406.43 972.02,439.78 979.64,444.42 987.26,444.05 994.88,443.78 1002.50,443.78 1010.12,443.36 1017.74,394.69 1025.36,398.43 1032.98,427.77 1040.60,442.98 1048.22,444.05 1055.84,411.77 1063.46,444.85 1071.08,444.85 1078.70,444.85 1086.32,444.85 1093.94,444.85 1101.56,444.85 1109.18,444.85 1116.80,444.85 1124.42,444.85 1132.04,444.85 1139.66,444.85 1147.28,444.85 1154.90,444.85 1154.90,445.45" fill="#edc240" fill-opacity="0.4"/>
<polyline points="698.20,444.68 705.82,444.26 713.44,443.88 721.06,407.86 728.68,337.43 736.30,435.88 743.92,444.26 751.54,411.60 759.16,382.25 766.78,440.04 774.40,444.42 782.02,434.76 789.64,404.13 797.26,347.57 804.88,403.06 812.50,436.84 820.12,444.26 827.74,444.95 835.36,392.92 842.98,411.60 850.60,426.27 858.22,443.88 865.84,443.08 873.46,400.93 881.08,435.34 888.70,396.66 896.32,400.93 903.94,429.21 911.56,366.78 919.18,385.99 926.80,433.69 934.42,410.00 942.04,431.56 949.66,443.08 957.28,334.23 964.90,407.33 972.52,440.68 980.14,445.32 987.76,444.95 995.38,444.68 1003.00,444.68 1010.62,444.26 1018.24,395.59 1025.86,399.33 1033.48,428.67 1041.10,443.88 1048.72,444.95 1056.34,412.67 1063.96,445.75 1071.58,445.75 1079.20,445.75 1086.82,445.75 1094.44,445.75 1102.06,445.75 1109.68,445.75 1117.30,445.75 1124.92,445.75 1132.54,445.75 1140.16,445.75 1147.78,445.75 1155.40,445.75" fill="none" stroke="#000" stroke-opacity="0.10" stroke-width="1.45" stroke-linejoin="round"/>
<polyline points="697.70,443.78 705.32,443.36 712.94,442.98 720.56,406.96 728.18,336.53 735.80,434.98 743.42,443.36 751.04,410.70 758.66,381.35 766.28,439.14 773.90,443.52 781.52,433.86 789.14,403.23 796.76,346.67 804.38,402.16 812.00,435.94 819.62,443.36 827.24,444.05 834.86,392.02 842.48,410.70 850.10,425.37 857.72,442.98 865.34,442.18 872.96,400.03 880.58,434.44 888.20,395.76 895.82,400.03 903.44,428.31 911.06,365.88 918.68,385.09 926.30,432.79 933.92,409.10 941.54,430.66 949.16,442.18 956.78,333.33 964.40,406.43 972.02,439.78 979.64,444.42 987.26,444.05 994.88,443.78 1002.50,443.78 1010.12,443.36 1017.74,394.69 1025.36,398.43 1032.98,427.77 1040.60,442.98 1048.22,444.05 1055.84,411.77 1063.46,444.85 1071.08,444.85 1078.70,444.85 1086.32,444.85 1093.94,444.85 1101.56,444.85 1109.18,444.85 1116.80,444.85 1124.42,444.85 1132.04,444.85 1139.66,444.85 1147.28,444.85 1154.90,444.85" fill="none" stroke="#edc240" stroke-width="1.45" stroke-linejoin="round"/>
<polygon points="697.70,445.45 697.70,443.25 705.32,441.49 712.94,441.65 720.56,438.45 728.18,436.58 735.80,442.98 743.42,444.05 751.04,439.35 758.66,440.05 766.28,443.36 773.90,443.78 781.52,440.58 789.14,440.21 796.76,434.87 804.38,441.49 812.00,442.98 819.62,442.29 827.24,441.92 834.86,438.98 842.48,441.49 850.10,440.58 857.72,443.57 865.34,442.50 872.96,440.85 880.58,442.29 888.20,439.35 895.82,441.27 903.44,440.42 911.06,438.45 918.68,439.35 926.30,442.29 933.92,442.29 941.54,439.78 949.16,441.49 956.78,438.07 964.40,441.92 972.02,443.78 979.64,444.05 987.26,442.98 994.88,442.50 1002.50,442.50 1010.12,443.57 1017.74,441.49 1025.36,442.50 1032.98,443.36 1040.60,443.78 1048.22,443.78 1055.84,444.42 1063.46,444.85 1071.08,444.85 1078.70,444.85 1086.32,444.85 1093.94,444.85 1101.56,444.85 1109.18,444.85 1116.80,444.85 1124.42,444.85 1132.04,444.85 1139.66,444.85 1147.28,444.85 1154.90,444.85 1154.90,445.45" fill="#afd8f8" fill-opacity="0.4"/>
<polyline points="698.20,444.15 705.82,442.39 713.44,442.55 721.06,439.35 728.68,437.48 736.30,443.88 743.92,444.95 751.54,440.25 759.16,440.95 766.78,444.26 774.40,444.68 782.02,441.48 789.64,441.11 797.26,435.77 804.88,442.39 812.50,443.88 820.12,443.19 827.74,442.82 835.36,439.88 842.98,442.39 850.60,441.48 858.22,444.47 865.84,443.40 873.46,441.75 881.08,443.19 888.70,440.25 896.32,442.17 903.94,441.32 911.56,439.35 919.18,440.25 926.80,443.19 934.42,443.19 942.04,440.68 949.66,442.39 957.28,438.97 964.90,442.82 972.52,444.68 980.14,444.95 987.76,443.88 995.38,443.40 1003.00,443.40 1010.62,444.47 1018.24,442.39 1025.86,443.40 1033.48,444.26 1041.10,444.68 1048.72,444.68 1056.34,445.32 1063.96,445.75 1071.58,445.75 1079.20,445.75 1086.82,445.75 1094.44,445.75 1102.06,445.75 1109.68,445.75 1117.30,445.75 1124.92,445.75 1132.54,445.75 1140.16,445.75 1147.78,445.75 1155.40,445.75" fill="none" stroke="#000" stroke-opacity="0.10" stroke-width="1.45" stroke-linejoin="round"/>
<polyline points="697.70,443.25 705.32,441.49 712.94,441.65 720.56,438.45 728.18,436.58 735.80,442.98 743.42,444.05 751.04,439.35 758.66,440.05 766.28,443.36 773.90,443.78 781.52,440.58 789.14,440.21 796.76,434.87 804.38,441.49 812.00,442.98 819.62,442.29 827.24,441.92 834.86,438.98 842.48,441.49 850.10,440.58 857.72,443.57 865.34,442.50 872.96,440.85 880.58,442.29 888.20,439.35 895.82,441.27 903.44,440.42 911.06,438.45 918.68,439.35 926.30,442.29 933.92,442.29 941.54,439.78 949.16,441.49 956.78,438.07 964.40,441.92 972.02,443.78 979.64,444.05 987.26,442.98 994.88,442.50 1002.50,442.50 1010.12,443.57 1017.74,441.49 1025.36,442.50 1032.98,443.36 1040.60,443.78 1048.22,443.78 1055.84,444.42 1063.46,444.85 1071.08,444.85 1078.70,444.85 1086.32,444.85 1093.94,444.85 1101.56,444.85 1109.18,444.85 1116.80,444.85 1124.42,444.85 1132.04,444.85 1139.66,444.85 1147.28,444.85 1154.90,444.85" fill="none" stroke="#afd8f8" stroke-width="1.45" stroke-linejoin="round"/>
<polyline points="698.20,445.75 705.82,445.75 713.44,445.75 721.06,445.75 728.68,445.75 736.30,445.75 743.92,445.75 751.54,445.75 759.16,445.75 766.78,445.75 774.40,445.75 782.02,445.75 789.64,445.75 797.26,445.75 804.88,445.75 812.50,445.75 820.12,445.75 827.74,445.75 835.36,445.75 842.98,445.75 850.60,445.75 858.22,445.75 865.84,445.75 873.46,445.75 881.08,445.75 888.70,445.75 896.32,445.75 903.94,445.75 911.56,445.75 919.18,445.75 926.80,445.75 934.42,445.75 942.04,445.75 949.66,445.75 957.28,445.75 964.90,445.75 972.52,445.75 980.14,445.75 987.76,445.75 995.38,445.75 1003.00,445.75 1010.62,445.75 1018.24,445.75 1025.86,445.75 1033.48,445.75 1041.10,445.75 1048.72,445.75 1056.34,445.75 1063.96,445.75 1071.58,445.75 1079.20,445.75 1086.82,445.75 1094.44,445.75 1102.06,445.75 1109.68,445.75 1117.30,445.75 1124.92,445.75 1132.54,445.75 1140.16,445.75 1147.78,445.75 1155.40,445.75" fill="none" stroke="#000" stroke-opacity="0.10" stroke-width="1.45" stroke-linejoin="round"/>
<polyline points="697.70,444.85 705.32,444.85 712.94,444.85 720.56,444.85 728.18,444.85 735.80,444.85 743.42,444.85 751.04,444.85 758.66,444.85 766.28,444.85 773.90,444.85 781.52,444.85 789.14,444.85 796.76,444.85 804.38,444.85 812.00,444.85 819.62,444.85 827.24,444.85 834.86,444.85 842.48,444.85 850.10,444.85 857.72,444.85 865.34,444.85 872.96,444.85 880.58,444.85 888.20,444.85 895.82,444.85 903.44,444.85 911.06,444.85 918.68,444.85 926.30,444.85 933.92,444.85 941.54,444.85 949.16,444.85 956.78,444.85 964.40,444.85 972.02,444.85 979.64,444.85 987.26,444.85 994.88,444.85 1002.50,444.85 1010.12,444.85 1017.74,444.85 1025.36,444.85 1032.98,444.85 1040.60,444.85 1048.22,444.85 1055.84,444.85 1063.46,444.85 1071.08,444.85 1078.70,444.85 1086.32,444.85 1093.94,444.85 1101.56,444.85 1109.18,444.85 1116.80,444.85 1124.42,444.85 1132.04,444.85 1139.66,444.85 1147.28,444.85 1154.90,444.85" fill="none" stroke="#cb4b4b" stroke-width="1.45" stroke-linejoin="round"/>
</g>
<rect x="171.50" y="496.35" width="457.20" height="134.60" fill="#fff"/>
<line x1="179.75" y1="496.35" x2="179.75" y2="630.95" stroke="#545454" stroke-opacity="0.22" stroke-width="0.7"/>
<line x1="255.75" y1="496.35" x2="255.75" y2="630.95" stroke="#545454" stroke-opacity="0.22" stroke-width="0.7"/>
<line x1="331.75" y1="496.35" x2="331.75" y2="630.95" stroke="#545454" stroke-opacity="0.22" stroke-width="0.7"/>
<line x1="407.75" y1="496.35" x2="407.75" y2="630.95" stroke="#545454" stroke-opacity="0.22" stroke-width="0.7"/>
<line x1="483.75" y1="496.35" x2="483.75" y2="630.95" stroke="#545454" stroke-opacity="0.22" stroke-width="0.7"/>
<line x1="559.75" y1="496.35" x2="559.75" y2="630.95" stroke="#545454" stroke-opacity="0.22" stroke-width="0.7"/>
<line x1="171.50" y1="603.67" x2="628.70" y2="603.67" stroke="#545454" stroke-opacity="0.22" stroke-width="0.7"/>
<line x1="171.50" y1="576.99" x2="628.70" y2="576.99" stroke="#545454" stroke-opacity="0.22" stroke-width="0.7"/>
<line x1="171.50" y1="550.31" x2="628.70" y2="550.31" stroke="#545454" stroke-opacity="0.22" stroke-width="0.7"/>
<line x1="171.50" y1="523.63" x2="628.70" y2="523.63" stroke="#545454" stroke-opacity="0.22" stroke-width="0.7"/>
<rect x="171.50" y="496.35" width="457.20" height="134.60" fill="none" stroke="#585858" stroke-width="1.45"/>
<clipPath id="cl171_496"><rect x="170.70" y="495.35" width="458.80" height="136.80"/></clipPath>
<g clip-path="url(#cl171_496)">
<polygon points="171.50,630.95 171.50,627.68 179.12,625.49 186.74,625.28 194.36,586.06 201.98,513.76 209.60,618.61 217.22,628.06 224.84,590.70 232.46,562.05 240.08,623.15 247.70,627.95 255.32,615.09 262.94,584.09 270.56,522.19 278.18,584.30 285.80,619.57 293.42,626.29 301.04,626.61 308.66,571.65 316.28,592.84 323.90,606.60 331.52,627.20 339.14,625.33 346.76,581.53 354.38,617.38 362.00,575.76 369.62,581.95 377.24,609.38 384.86,544.97 392.48,565.09 400.10,615.73 407.72,592.04 415.34,611.09 422.96,624.32 430.58,512.05 438.20,589.00 445.82,624.21 453.44,629.12 461.06,627.68 468.68,626.93 476.30,626.93 483.92,627.58 491.54,576.83 499.16,581.58 506.78,611.78 514.40,627.42 522.02,628.48 529.64,596.84 537.26,630.35 544.88,630.35 552.50,630.35 560.12,630.35 567.74,630.35 575.36,630.35 582.98,630.35 590.60,630.35 598.22,630.35 605.84,630.35 613.46,630.35 621.08,630.35 628.70,630.35 628.70,630.95" fill="#edc240" fill-opacity="0.4"/>
<polyline points="172.00,628.58 179.62,626.39 187.24,626.18 194.86,586.96 202.48,514.66 210.10,619.51 217.72,628.96 225.34,591.60 232.96,562.95 240.58,624.05 248.20,628.85 255.82,615.99 263.44,584.99 271.06,523.09 278.68,585.20 286.30,620.47 293.92,627.19 301.54,627.51 309.16,572.55 316.78,593.74 324.40,607.50 332.02,628.10 339.64,626.23 347.26,582.43 354.88,618.28 362.50,576.66 370.12,582.85 377.74,610.28 385.36,545.87 392.98,565.99 400.60,616.63 408.22,592.94 415.84,611.99 423.46,625.22 431.08,512.95 438.70,589.90 446.32,625.11 453.94,630.02 461.56,628.58 469.18,627.83 476.80,627.83 484.42,628.48 492.04,577.73 499.66,582.48 507.28,612.68 514.90,628.32 522.52,629.38 530.14,597.74 537.76,631.25 545.38,631.25 553.00,631.25 560.62,631.25 568.24,631.25 575.86,631.25 583.48,631.25 591.10,631.25 598.72,631.25 606.34,631.25 613.96,631.25 621.58,631.25 629.20,631.25" fill="none" stroke="#000" stroke-opacity="0.10" stroke-width="1.45" stroke-linejoin="round"/>
<polyline points="171.50,627.68 179.12,625.49 186.74,625.28 194.36,586.06 201.98,513.76 209.60,618.61 217.22,628.06 224.84,590.70 232.46,562.05 240.08,623.15 247.70,627.95 255.32,615.09 262.94,584.09 270.56,522.19 278.18,584.30 285.80,619.57 293.42,626.29 301.04,626.61 308.66,571.65 316.28,592.84 323.90,606.60 331.52,627.20 339.14,625.33 346.76,581.53 354.38,617.38 362.00,575.76 369.62,581.95 377.24,609.38 384.86,544.97 392.48,565.09 400.10,615.73 407.72,592.04 415.34,611.09 422.96,624.32 430.58,512.05 438.20,589.00 445.82,624.21 453.44,629.12 461.06,627.68 468.68,626.93 476.30,626.93 483.92,627.58 491.54,576.83 499.16,581.58 506.78,611.78 514.40,627.42 522.02,628.48 529.64,596.84 537.26,630.35 544.88,630.35 552.50,630.35 560.12,630.35 567.74,630.35 575.36,630.35 582.98,630.35 590.60,630.35 598.22,630.35 605.84,630.35 613.46,630.35 621.08,630.35 628.70,630.35" fill="none" stroke="#edc240" stroke-width="1.45" stroke-linejoin="round"/>
<polygon points="171.50,630.95 171.50,627.68 179.12,625.49 186.74,625.28 194.36,586.06 201.98,513.76 209.60,618.61 217.22,628.06 224.84,590.70 232.46,562.05 240.08,623.15 247.70,627.95 255.32,615.09 262.94,584.09 270.56,522.19 278.18,584.30 285.80,619.57 293.42,626.29 301.04,626.61 308.66,571.65 316.28,592.84 323.90,606.60 331.52,627.20 339.14,625.33 346.76,581.53 354.38,617.38 362.00,575.76 369.62,581.95 377.24,609.38 384.86,544.97 392.48,565.09 400.10,615.73 407.72,592.04 415.34,611.09 422.96,624.32 430.58,512.05 438.20,589.00 445.82,624.21 453.44,629.12 461.06,627.68 468.68,626.93 476.30,626.93 483.92,627.58 491.54,576.83 499.16,581.58 506.78,611.78 514.40,627.42 522.02,628.48 529.64,596.84 537.26,630.35 544.88,630.35 552.50,630.35 560.12,630.35 567.74,630.35 575.36,630.35 582.98,630.35 590.60,630.35 598.22,630.35 605.84,630.35 613.46,630.35 621.08,630.35 628.70,630.35 628.70,630.95" fill="#afd8f8" fill-opacity="0.4"/>
<polyline points="172.00,628.58 179.62,626.39 187.24,626.18 194.86,586.96 202.48,514.66 210.10,619.51 217.72,628.96 225.34,591.60 232.96,562.95 240.58,624.05 248.20,628.85 255.82,615.99 263.44,584.99 271.06,523.09 278.68,585.20 286.30,620.47 293.92,627.19 301.54,627.51 309.16,572.55 316.78,593.74 324.40,607.50 332.02,628.10 339.64,626.23 347.26,582.43 354.88,618.28 362.50,576.66 370.12,582.85 377.74,610.28 385.36,545.87 392.98,565.99 400.60,616.63 408.22,592.94 415.84,611.99 423.46,625.22 431.08,512.95 438.70,589.90 446.32,625.11 453.94,630.02 461.56,628.58 469.18,627.83 476.80,627.83 484.42,628.48 492.04,577.73 499.66,582.48 507.28,612.68 514.90,628.32 522.52,629.38 530.14,597.74 537.76,631.25 545.38,631.25 553.00,631.25 560.62,631.25 568.24,631.25 575.86,631.25 583.48,631.25 591.10,631.25 598.72,631.25 606.34,631.25 613.96,631.25 621.58,631.25 629.20,631.25" fill="none" stroke="#000" stroke-opacity="0.10" stroke-width="1.45" stroke-linejoin="round"/>
<polyline points="171.50,627.68 179.12,625.49 186.74,625.28 194.36,586.06 201.98,513.76 209.60,618.61 217.22,628.06 224.84,590.70 232.46,562.05 240.08,623.15 247.70,627.95 255.32,615.09 262.94,584.09 270.56,522.19 278.18,584.30 285.80,619.57 293.42,626.29 301.04,626.61 308.66,571.65 316.28,592.84 323.90,606.60 331.52,627.20 339.14,625.33 346.76,581.53 354.38,617.38 362.00,575.76 369.62,581.95 377.24,609.38 384.86,544.97 392.48,565.09 400.10,615.73 407.72,592.04 415.34,611.09 422.96,624.32 430.58,512.05 438.20,589.00 445.82,624.21 453.44,629.12 461.06,627.68 468.68,626.93 476.30,626.93 483.92,627.58 491.54,576.83 499.16,581.58 506.78,611.78 514.40,627.42 522.02,628.48 529.64,596.84 537.26,630.35 544.88,630.35 552.50,630.35 560.12,630.35 567.74,630.35 575.36,630.35 582.98,630.35 590.60,630.35 598.22,630.35 605.84,630.35 613.46,630.35 621.08,630.35 628.70,630.35" fill="none" stroke="#afd8f8" stroke-width="1.45" stroke-linejoin="round"/>
<polyline points="172.00,631.25 179.62,631.25 187.24,631.25 194.86,631.25 202.48,631.25 210.10,631.25 217.72,631.25 225.34,631.25 232.96,631.25 240.58,631.25 248.20,631.25 255.82,631.25 263.44,631.25 271.06,631.25 278.68,631.25 286.30,631.25 293.92,631.25 301.54,631.25 309.16,631.25 316.78,631.25 324.40,631.25 332.02,631.25 339.64,631.25 347.26,631.25 354.88,631.25 362.50,631.25 370.12,631.25 377.74,631.25 385.36,631.25 392.98,631.25 400.60,631.25 408.22,631.25 415.84,631.25 423.46,631.25 431.08,631.25 438.70,631.25 446.32,631.25 453.94,631.25 461.56,631.25 469.18,631.25 476.80,631.25 484.42,631.25 492.04,631.25 499.66,631.25 507.28,631.25 514.90,631.25 522.52,631.25 530.14,631.25 537.76,631.25 545.38,631.25 553.00,631.25 560.62,631.25 568.24,631.25 575.86,631.25 583.48,631.25 591.10,631.25 598.72,631.25 606.34,631.25 613.96,631.25 621.58,631.25 629.20,631.25" fill="none" stroke="#000" stroke-opacity="0.10" stroke-width="1.45" stroke-linejoin="round"/>
<polyline points="171.50,630.35 179.12,630.35 186.74,630.35 194.36,630.35 201.98,630.35 209.60,630.35 217.22,630.35 224.84,630.35 232.46,630.35 240.08,630.35 247.70,630.35 255.32,630.35 262.94,630.35 270.56,630.35 278.18,630.35 285.80,630.35 293.42,630.35 301.04,630.35 308.66,630.35 316.28,630.35 323.90,630.35 331.52,630.35 339.14,630.35 346.76,630.35 354.38,630.35 362.00,630.35 369.62,630.35 377.24,630.35 384.86,630.35 392.48,630.35 400.10,630.35 407.72,630.35 415.34,630.35 422.96,630.35 430.58,630.35 438.20,630.35 445.82,630.35 453.44,630.35 461.06,630.35 468.68,630.35 476.30,630.35 483.92,630.35 491.54,630.35 499.16,630.35 506.78,630.35 514.40,630.35 522.02,630.35 529.64,630.35 537.26,630.35 544.88,630.35 552.50,630.35 560.12,630.35 567.74,630.35 575.36,630.35 582.98,630.35 590.60,630.35 598.22,630.35 605.84,630.35 613.46,630.35 621.08,630.35 628.70,630.35" fill="none" stroke="#cb4b4b" stroke-width="1.45" stroke-linejoin="round"/>
<polyline points="172.00,631.25 179.62,631.25 187.24,631.25 194.86,631.25 202.48,631.25 210.10,631.25 217.72,631.25 225.34,631.25 232.96,631.25 240.58,631.25 248.20,631.25 255.82,631.25 263.44,631.25 271.06,631.25 278.68,631.25 286.30,631.25 293.92,631.25 301.54,631.25 309.16,631.25 316.78,631.25 324.40,631.25 332.02,631.25 339.64,631.25 347.26,631.25 354.88,631.25 362.50,631.25 370.12,631.25 377.74,631.25 385.36,631.25 392.98,631.25 400.60,631.25 408.22,631.25 415.84,631.25 423.46,631.25 431.08,631.25 438.70,631.25 446.32,631.25 453.94,631.25 461.56,631.25 469.18,631.25 476.80,631.25 484.42,631.25 492.04,631.25 499.66,631.25 507.28,631.25 514.90,631.25 522.52,631.25 530.14,631.25 537.76,631.25 545.38,631.25 553.00,631.25 560.62,631.25 568.24,631.25 575.86,631.25 583.48,631.25 591.10,631.25 598.72,631.25 606.34,631.25 613.96,631.25 621.58,631.25 629.20,631.25" fill="none" stroke="#000" stroke-opacity="0.10" stroke-width="1.45" stroke-linejoin="round"/>
<polyline points="171.50,630.35 179.12,630.35 186.74,630.35 194.36,630.35 201.98,630.35 209.60,630.35 217.22,630.35 224.84,630.35 232.46,630.35 240.08,630.35 247.70,630.35 255.32,630.35 262.94,630.35 270.56,630.35 278.18,630.35 285.80,630.35 293.42,630.35 301.04,630.35 308.66,630.35 316.28,630.35 323.90,630.35 331.52,630.35 339.14,630.35 346.76,630.35 354.38,630.35 362.00,630.35 369.62,630.35 377.24,630.35 384.86,630.35 392.48,630.35 400.10,630.35 407.72,630.35 415.34,630.35 422.96,630.35 430.58,630.35 438.20,630.35 445.82,630.35 453.44,630.35 461.06,630.35 468.68,630.35 476.30,630.35 483.92,630.35 491.54,630.35 499.16,630.35 506.78,630.35 514.40,630.35 522.02,630.35 529.64,630.35 537.26,630.35 544.88,630.35 552.50,630.35 560.12,630.35 567.74,630.35 575.36,630.35 582.98,630.35 590.60,630.35 598.22,630.35 605.84,630.35 613.46,630.35 621.08,630.35 628.70,630.35" fill="none" stroke="#4da74d" stroke-width="1.45" stroke-linejoin="round"/>
<polyline points="172.00,631.25 179.62,631.25 187.24,631.25 194.86,631.25 202.48,631.25 210.10,631.25 217.72,631.25 225.34,631.25 232.96,631.25 240.58,631.25 248.20,631.25 255.82,631.25 263.44,631.25 271.06,631.25 278.68,631.25 286.30,631.25 293.92,631.25 301.54,631.25 309.16,631.25 316.78,631.25 324.40,631.25 332.02,631.25 339.64,631.25 347.26,631.25 354.88,631.25 362.50,631.25 370.12,631.25 377.74,631.25 385.36,631.25 392.98,631.25 400.60,631.25 408.22,631.25 415.84,631.25 423.46,631.25 431.08,631.25 438.70,631.25 446.32,631.25 453.94,631.25 461.56,631.25 469.18,631.25 476.80,631.25 484.42,631.25 492.04,631.25 499.66,631.25 507.28,631.25 514.90,631.25 522.52,631.25 530.14,631.25 537.76,631.25 545.38,631.25 553.00,631.25 560.62,631.25 568.24,631.25 575.86,631.25 583.48,631.25 591.10,631.25 598.72,631.25 606.34,631.25 613.96,631.25 621.58,631.25 629.20,631.25" fill="none" stroke="#000" stroke-opacity="0.10" stroke-width="1.45" stroke-linejoin="round"/>
<polyline points="171.50,630.35 179.12,630.35 186.74,630.35 194.36,630.35 201.98,630.35 209.60,630.35 217.22,630.35 224.84,630.35 232.46,630.35 240.08,630.35 247.70,630.35 255.32,630.35 262.94,630.35 270.56,630.35 278.18,630.35 285.80,630.35 293.42,630.35 301.04,630.35 308.66,630.35 316.28,630.35 323.90,630.35 331.52,630.35 339.14,630.35 346.76,630.35 354.38,630.35 362.00,630.35 369.62,630.35 377.24,630.35 384.86,630.35 392.48,630.35 400.10,630.35 407.72,630.35 415.34,630.35 422.96,630.35 430.58,630.35 438.20,630.35 445.82,630.35 453.44,630.35 461.06,630.35 468.68,630.35 476.30,630.35 483.92,630.35 491.54,630.35 499.16,630.35 506.78,630.35 514.40,630.35 522.02,630.35 529.64,630.35 537.26,630.35 544.88,630.35 552.50,630.35 560.12,630.35 567.74,630.35 575.36,630.35 582.98,630.35 590.60,630.35 598.22,630.35 605.84,630.35 613.46,630.35 621.08,630.35 628.70,630.35" fill="none" stroke="#9440ed" stroke-width="1.45" stroke-linejoin="round"/>
</g>
<rect x="697.70" y="496.35" width="457.20" height="134.60" fill="#fff"/>
<line x1="705.95" y1="496.35" x2="705.95" y2="630.95" stroke="#545454" stroke-opacity="0.22" stroke-width="0.7"/>
<line x1="781.95" y1="496.35" x2="781.95" y2="630.95" stroke="#545454" stroke-opacity="0.22" stroke-width="0.7"/>
<line x1="857.95" y1="496.35" x2="857.95" y2="630.95" stroke="#545454" stroke-opacity="0.22" stroke-width="0.7"/>
<line x1="933.95" y1="496.35" x2="933.95" y2="630.95" stroke="#545454" stroke-opacity="0.22" stroke-width="0.7"/>
<line x1="1009.95" y1="496.35" x2="1009.95" y2="630.95" stroke="#545454" stroke-opacity="0.22" stroke-width="0.7"/>
<line x1="1085.95" y1="496.35" x2="1085.95" y2="630.95" stroke="#545454" stroke-opacity="0.22" stroke-width="0.7"/>
<line x1="697.70" y1="603.67" x2="1154.90" y2="603.67" stroke="#545454" stroke-opacity="0.22" stroke-width="0.7"/>
<line x1="697.70" y1="576.99" x2="1154.90" y2="576.99" stroke="#545454" stroke-opacity="0.22" stroke-width="0.7"/>
<line x1="697.70" y1="550.31" x2="1154.90" y2="550.31" stroke="#545454" stroke-opacity="0.22" stroke-width="0.7"/>
<line x1="697.70" y1="523.63" x2="1154.90" y2="523.63" stroke="#545454" stroke-opacity="0.22" stroke-width="0.7"/>
<rect x="697.70" y="496.35" width="457.20" height="134.60" fill="none" stroke="#585858" stroke-width="1.45"/>
<clipPath id="cl697_496"><rect x="696.90" y="495.35" width="458.80" height="136.80"/></clipPath>
<g clip-path="url(#cl697_496)">
<polygon points="697.70,630.95 697.70,627.68 705.32,625.49 712.94,625.28 720.56,586.06 728.18,513.76 735.80,618.61 743.42,628.06 751.04,590.70 758.66,562.05 766.28,623.15 773.90,627.95 781.52,615.09 789.14,584.09 796.76,522.19 804.38,584.30 812.00,619.57 819.62,626.29 827.24,626.61 834.86,571.65 842.48,592.84 850.10,606.60 857.72,627.20 865.34,625.33 872.96,581.53 880.58,617.38 888.20,575.76 895.82,581.95 903.44,609.38 911.06,544.97 918.68,565.09 926.30,615.73 933.92,592.04 941.54,611.09 949.16,624.32 956.78,512.05 964.40,589.00 972.02,624.21 979.64,629.12 987.26,627.68 994.88,626.93 1002.50,626.93 1010.12,627.58 1017.74,576.83 1025.36,581.58 1032.98,611.78 1040.60,627.42 1048.22,628.48 1055.84,596.84 1063.46,630.35 1071.08,630.35 1078.70,630.35 1086.32,630.35 1093.94,630.35 1101.56,630.35 1109.18,630.35 1116.80,630.35 1124.42,630.35 1132.04,630.35 1139.66,630.35 1147.28,630.35 1154.90,630.35 1154.90,630.95" fill="#edc240" fill-opacity="0.4"/>
<polyline points="698.20,628.58 705.82,626.39 713.44,626.18 721.06,586.96 728.68,514.66 736.30,619.51 743.92,628.96 751.54,591.60 759.16,562.95 766.78,624.05 774.40,628.85 782.02,615.99 789.64,584.99 797.26,523.09 804.88,585.20 812.50,620.47 820.12,627.19 827.74,627.51 835.36,572.55 842.98,593.74 850.60,607.50 858.22,628.10 865.84,626.23 873.46,582.43 881.08,618.28 888.70,576.66 896.32,582.85 903.94,610.28 911.56,545.87 919.18,565.99 926.80,616.63 934.42,592.94 942.04,611.99 949.66,625.22 957.28,512.95 964.90,589.90 972.52,625.11 980.14,630.02 987.76,628.58 995.38,627.83 1003.00,627.83 1010.62,628.48 1018.24,577.73 1025.86,582.48 1033.48,612.68 1041.10,628.32 1048.72,629.38 1056.34,597.74 1063.96,631.25 1071.58,631.25 1079.20,631.25 1086.82,631.25 1094.44,631.25 1102.06,631.25 1109.68,631.25 1117.30,631.25 1124.92,631.25 1132.54,631.25 1140.16,631.25 1147.78,631.25 1155.40,631.25" fill="none" stroke="#000" stroke-opacity="0.10" stroke-width="1.45" stroke-linejoin="round"/>
<polyline points="697.70,627.68 705.32,625.49 712.94,625.28 720.56,586.06 728.18,513.76 735.80,618.61 743.42,628.06 751.04,590.70 758.66,562.05 766.28,623.15 773.90,627.95 781.52,615.09 789.14,584.09 796.76,522.19 804.38,584.30 812.00,619.57 819.62,626.29 827.24,626.61 834.86,571.65 842.48,592.84 850.10,606.60 857.72,627.20 865.34,625.33 872.96,581.53 880.58,617.38 888.20,575.76 895.82,581.95 903.44,609.38 911.06,544.97 918.68,565.09 926.30,615.73 933.92,592.04 941.54,611.09 949.16,624.32 956.78,512.05 964.40,589.00 972.02,624.21 979.64,629.12 987.26,627.68 994.88,626.93 1002.50,626.93 1010.12,627.58 1017.74,576.83 1025.36,581.58 1032.98,611.78 1040.60,627.42 1048.22,628.48 1055.84,596.84 1063.46,630.35 1071.08,630.35 1078.70,630.35 1086.32,630.35 1093.94,630.35 1101.56,630.35 1109.18,630.35 1116.80,630.35 1124.42,630.35 1132.04,630.35 1139.66,630.35 1147.28,630.35 1154.90,630.35" fill="none" stroke="#edc240" stroke-width="1.45" stroke-linejoin="round"/>
<polyline points="698.20,631.25 705.82,631.25 713.44,631.25 721.06,631.25 728.68,631.25 736.30,631.25 743.92,631.25 751.54,631.25 759.16,631.25 766.78,631.25 774.40,631.25 782.02,631.25 789.64,631.25 797.26,631.25 804.88,631.25 812.50,631.25 820.12,631.25 827.74,631.25 835.36,631.25 842.98,631.25 850.60,631.25 858.22,631.25 865.84,631.25 873.46,631.25 881.08,631.25 888.70,631.25 896.32,631.25 903.94,631.25 911.56,631.25 919.18,631.25 926.80,631.25 934.42,631.25 942.04,631.25 949.66,631.25 957.28,631.25 964.90,631.25 972.52,631.25 980.14,631.25 987.76,631.25 995.38,631.25 1003.00,631.25 1010.62,631.25 1018.24,631.25 1025.86,631.25 1033.48,631.25 1041.10,631.25 1048.72,631.25 1056.34,631.25 1063.96,631.25 1071.58,631.25 1079.20,631.25 1086.82,631.25 1094.44,631.25 1102.06,631.25 1109.68,631.25 1117.30,631.25 1124.92,631.25 1132.54,631.25 1140.16,631.25 1147.78,631.25 1155.40,631.25" fill="none" stroke="#000" stroke-opacity="0.10" stroke-width="1.45" stroke-linejoin="round"/>
<polyline points="697.70,630.35 705.32,630.35 712.94,630.35 720.56,630.35 728.18,630.35 735.80,630.35 743.42,630.35 751.04,630.35 758.66,630.35 766.28,630.35 773.90,630.35 781.52,630.35 789.14,630.35 796.76,630.35 804.38,630.35 812.00,630.35 819.62,630.35 827.24,630.35 834.86,630.35 842.48,630.35 850.10,630.35 857.72,630.35 865.34,630.35 872.96,630.35 880.58,630.35 888.20,630.35 895.82,630.35 903.44,630.35 911.06,630.35 918.68,630.35 926.30,630.35 933.92,630.35 941.54,630.35 949.16,630.35 956.78,630.35 964.40,630.35 972.02,630.35 979.64,630.35 987.26,630.35 994.88,630.35 1002.50,630.35 1010.12,630.35 1017.74,630.35 1025.36,630.35 1032.98,630.35 1040.60,630.35 1048.22,630.35 1055.84,630.35 1063.46,630.35 1071.08,630.35 1078.70,630.35 1086.32,630.35 1093.94,630.35 1101.56,630.35 1109.18,630.35 1116.80,630.35 1124.42,630.35 1132.04,630.35 1139.66,630.35 1147.28,630.35 1154.90,630.35" fill="none" stroke="#afd8f8" stroke-width="1.45" stroke-linejoin="round"/>
<polyline points="698.20,631.25 705.82,631.25 713.44,631.25 721.06,631.25 728.68,631.25 736.30,631.25 743.92,631.25 751.54,631.25 759.16,631.25 766.78,631.25 774.40,631.25 782.02,631.25 789.64,631.25 797.26,631.25 804.88,631.25 812.50,631.25 820.12,631.25 827.74,631.25 835.36,631.25 842.98,631.25 850.60,631.25 858.22,631.25 865.84,631.25 873.46,631.25 881.08,631.25 888.70,631.25 896.32,631.25 903.94,631.25 911.56,631.25 919.18,631.25 926.80,631.25 934.42,631.25 942.04,631.25 949.66,631.25 957.28,631.25 964.90,631.25 972.52,631.25 980.14,631.25 987.76,631.25 995.38,631.25 1003.00,631.25 1010.62,631.25 1018.24,631.25 1025.86,631.25 1033.48,631.25 1041.10,631.25 1048.72,631.25 1056.34,631.25 1063.96,631.25 1071.58,631.25 1079.20,631.25 1086.82,631.25 1094.44,631.25 1102.06,631.25 1109.68,631.25 1117.30,631.25 1124.92,631.25 1132.54,631.25 1140.16,631.25 1147.78,631.25 1155.40,631.25" fill="none" stroke="#000" stroke-opacity="0.10" stroke-width="1.45" stroke-linejoin="round"/>
<polyline points="697.70,630.35 705.32,630.35 712.94,630.35 720.56,630.35 728.18,630.35 735.80,630.35 743.42,630.35 751.04,630.35 758.66,630.35 766.28,630.35 773.90,630.35 781.52,630.35 789.14,630.35 796.76,630.35 804.38,630.35 812.00,630.35 819.62,630.35 827.24,630.35 834.86,630.35 842.48,630.35 850.10,630.35 857.72,630.35 865.34,630.35 872.96,630.35 880.58,630.35 888.20,630.35 895.82,630.35 903.44,630.35 911.06,630.35 918.68,630.35 926.30,630.35 933.92,630.35 941.54,630.35 949.16,630.35 956.78,630.35 964.40,630.35 972.02,630.35 979.64,630.35 987.26,630.35 994.88,630.35 1002.50,630.35 1010.12,630.35 1017.74,630.35 1025.36,630.35 1032.98,630.35 1040.60,630.35 1048.22,630.35 1055.84,630.35 1063.46,630.35 1071.08,630.35 1078.70,630.35 1086.32,630.35 1093.94,630.35 1101.56,630.35 1109.18,630.35 1116.80,630.35 1124.42,630.35 1132.04,630.35 1139.66,630.35 1147.28,630.35 1154.90,630.35" fill="none" stroke="#cb4b4b" stroke-width="1.45" stroke-linejoin="round"/>
<polyline points="698.20,631.25 705.82,631.25 713.44,631.25 721.06,631.25 728.68,631.25 736.30,631.25 743.92,631.25 751.54,631.25 759.16,631.25 766.78,631.25 774.40,631.25 782.02,631.25 789.64,631.25 797.26,631.25 804.88,631.25 812.50,631.25 820.12,631.25 827.74,631.25 835.36,631.25 842.98,631.25 850.60,631.25 858.22,631.25 865.84,631.25 873.46,631.25 881.08,631.25 888.70,631.25 896.32,631.25 903.94,631.25 911.56,631.25 919.18,631.25 926.80,631.25 934.42,631.25 942.04,631.25 949.66,631.25 957.28,631.25 964.90,631.25 972.52,631.25 980.14,631.25 987.76,631.25 995.38,631.25 1003.00,631.25 1010.62,631.25 1018.24,631.25 1025.86,631.25 1033.48,631.25 1041.10,631.25 1048.72,631.25 1056.34,631.25 1063.96,631.25 1071.58,631.25 1079.20,631.25 1086.82,631.25 1094.44,631.25 1102.06,631.25 1109.68,631.25 1117.30,631.25 1124.92,631.25 1132.54,631.25 1140.16,631.25 1147.78,631.25 1155.40,631.25" fill="none" stroke="#000" stroke-opacity="0.10" stroke-width="1.45" stroke-linejoin="round"/>
<polyline points="697.70,630.35 705.32,630.35 712.94,630.35 720.56,630.35 728.18,630.35 735.80,630.35 743.42,630.35 751.04,630.35 758.66,630.35 766.28,630.35 773.90,630.35 781.52,630.35 789.14,630.35 796.76,630.35 804.38,630.35 812.00,630.35 819.62,630.35 827.24,630.35 834.86,630.35 842.48,630.35 850.10,630.35 857.72,630.35 865.34,630.35 872.96,630.35 880.58,630.35 888.20,630.35 895.82,630.35 903.44,630.35 911.06,630.35 918.68,630.35 926.30,630.35 933.92,630.35 941.54,630.35 949.16,630.35 956.78,630.35 964.40,630.35 972.02,630.35 979.64,630.35 987.26,630.35 994.88,630.35 1002.50,630.35 1010.12,630.35 1017.74,630.35 1025.36,630.35 1032.98,630.35 1040.60,630.35 1048.22,630.35 1055.84,630.35 1063.46,630.35 1071.08,630.35 1078.70,630.35 1086.32,630.35 1093.94,630.35 1101.56,630.35 1109.18,630.35 1116.80,630.35 1124.42,630.35 1132.04,630.35 1139.66,630.35 1147.28,630.35 1154.90,630.35" fill="none" stroke="#4da74d" stroke-width="1.45" stroke-linejoin="round"/>
<polyline points="698.20,631.25 705.82,631.25 713.44,631.25 721.06,631.25 728.68,631.25 736.30,631.25 743.92,631.25 751.54,631.25 759.16,631.25 766.78,631.25 774.40,631.25 782.02,631.25 789.64,631.25 797.26,631.25 804.88,631.25 812.50,631.25 820.12,631.25 827.74,631.25 835.36,631.25 842.98,631.25 850.60,631.25 858.22,631.25 865.84,631.25 873.46,631.25 881.08,631.25 888.70,631.25 896.32,631.25 903.94,631.25 911.56,631.25 919.18,631.25 926.80,631.25 934.42,631.25 942.04,631.25 949.66,631.25 957.28,631.25 964.90,631.25 972.52,631.25 980.14,631.25 987.76,631.25 995.38,631.25 1003.00,631.25 1010.62,631.25 1018.24,631.25 1025.86,631.25 1033.48,631.25 1041.10,631.25 1048.72,631.25 1056.34,631.25 1063.96,631.25 1071.58,631.25 1079.20,631.25 1086.82,631.25 1094.44,631.25 1102.06,631.25 1109.68,631.25 1117.30,631.25 1124.92,631.25 1132.54,631.25 1140.16,631.25 1147.78,631.25 1155.40,631.25" fill="none" stroke="#000" stroke-opacity="0.10" stroke-width="1.45" stroke-linejoin="round"/>
<polyline points="697.70,630.35 705.32,630.35 712.94,630.35 720.56,630.35 728.18,630.35 735.80,630.35 743.42,630.35 751.04,630.35 758.66,630.35 766.28,630.35 773.90,630.35 781.52,630.35 789.14,630.35 796.76,630.35 804.38,630.35 812.00,630.35 819.62,630.35 827.24,630.35 834.86,630.35 842.48,630.35 850.10,630.35 857.72,630.35 865.34,630.35 872.96,630.35 880.58,630.35 888.20,630.35 895.82,630.35 903.44,630.35 911.06,630.35 918.68,630.35 926.30,630.35 933.92,630.35 941.54,630.35 949.16,630.35 956.78,630.35 964.40,630.35 972.02,630.35 979.64,630.35 987.26,630.35 994.88,630.35 1002.50,630.35 1010.12,630.35 1017.74,630.35 1025.36,630.35 1032.98,630.35 1040.60,630.35 1048.22,630.35 1055.84,630.35 1063.46,630.35 1071.08,630.35 1078.70,630.35 1086.32,630.35 1093.94,630.35 1101.56,630.35 1109.18,630.35 1116.80,630.35 1124.42,630.35 1132.04,630.35 1139.66,630.35 1147.28,630.35 1154.90,630.35" fill="none" stroke="#9440ed" stroke-width="1.45" stroke-linejoin="round"/>
</g>
</svg>
<div class="lgbg" style="left:174.40px;top:96.10px;width:64.00px;height:10.42px"></div>
<div class="sw" style="left:175.30px;top:97.30px;"><i style="background:#edc240"></i></div>
<svg class="ic" style="left:646.60px;top:88.00px;color:#1a1a1a" width="8.00" height="7.90" viewBox="0 0 16 16" fill="#1a1a1a" stroke="none" preserveAspectRatio="none"><circle cx="6.900" cy="6.900" r="5.500" fill="none" stroke="currentColor" stroke-width="2.700"/><path d="M11.400 11.400L15 15" stroke="currentColor" stroke-width="2.900" stroke-linecap="round"/></svg>
<svg class="ic" style="left:646.90px;top:101.10px;color:#1a1a1a" width="7.00" height="6.90" viewBox="0 0 16 16" fill="#1a1a1a" stroke="none" preserveAspectRatio="none"><path d="M8.500 7.500V1.100l6.400 6.400zM7.500 8.500v6.400L1.100 8.500z"/><path d="M11.200 4.800L15.300.7M4.800 11.200L.7 15.300" stroke="currentColor" stroke-width="2.400" stroke-linecap="round"/></svg>
<svg class="ic" style="left:647.20px;top:115.40px;color:#1a1a1a" width="6.50" height="3.70" viewBox="0 0 16 9" fill="#1a1a1a" stroke="none" preserveAspectRatio="none"><path d="M0 0h16L8 9z"/></svg>
<div class="lgbg" style="left:174.40px;top:314.35px;width:86.00px;height:31.26px"></div>
<div class="sw" style="left:175.30px;top:315.55px;"><i style="background:#edc240"></i></div>
<div class="sw" style="left:175.30px;top:325.97px;"><i style="background:#afd8f8"></i></div>
<div class="sw" style="left:175.30px;top:336.39px;"><i style="background:#cb4b4b"></i></div>
<svg class="ic" style="left:646.60px;top:306.25px;color:#1a1a1a" width="8.00" height="7.90" viewBox="0 0 16 16" fill="#1a1a1a" stroke="none" preserveAspectRatio="none"><circle cx="6.900" cy="6.900" r="5.500" fill="none" stroke="currentColor" stroke-width="2.700"/><path d="M11.400 11.400L15 15" stroke="currentColor" stroke-width="2.900" stroke-linecap="round"/></svg>
<svg class="ic" style="left:646.90px;top:319.35px;color:#1a1a1a" width="7.00" height="6.90" viewBox="0 0 16 16" fill="#1a1a1a" stroke="none" preserveAspectRatio="none"><path d="M8.500 7.500V1.100l6.400 6.400zM7.500 8.500v6.400L1.100 8.500z"/><path d="M11.200 4.800L15.300.7M4.800 11.200L.7 15.300" stroke="currentColor" stroke-width="2.400" stroke-linecap="round"/></svg>
<svg class="ic" style="left:647.20px;top:333.65px;color:#1a1a1a" width="6.50" height="3.70" viewBox="0 0 16 9" fill="#1a1a1a" stroke="none" preserveAspectRatio="none"><path d="M0 0h16L8 9z"/></svg>
<div class="lgbg" style="left:700.60px;top:314.35px;width:86.00px;height:31.26px"></div>
<div class="sw" style="left:701.50px;top:315.55px;"><i style="background:#edc240"></i></div>
<div class="sw" style="left:701.50px;top:325.97px;"><i style="background:#afd8f8"></i></div>
<div class="sw" style="left:701.50px;top:336.39px;"><i style="background:#cb4b4b"></i></div>
<svg class="ic" style="left:1172.80px;top:306.25px;color:#1a1a1a" width="8.00" height="7.90" viewBox="0 0 16 16" fill="#1a1a1a" stroke="none" preserveAspectRatio="none"><circle cx="6.900" cy="6.900" r="5.500" fill="none" stroke="currentColor" stroke-width="2.700"/><path d="M11.400 11.400L15 15" stroke="currentColor" stroke-width="2.900" stroke-linecap="round"/></svg>
<svg class="ic" style="left:1173.10px;top:319.35px;color:#1a1a1a" width="7.00" height="6.90" viewBox="0 0 16 16" fill="#1a1a1a" stroke="none" preserveAspectRatio="none"><path d="M8.500 7.500V1.100l6.400 6.400zM7.500 8.500v6.400L1.100 8.500z"/><path d="M11.200 4.800L15.300.7M4.800 11.200L.7 15.300" stroke="currentColor" stroke-width="2.400" stroke-linecap="round"/></svg>
<svg class="ic" style="left:1173.40px;top:333.65px;color:#1a1a1a" width="6.50" height="3.70" viewBox="0 0 16 9" fill="#1a1a1a" stroke="none" preserveAspectRatio="none"><path d="M0 0h16L8 9z"/></svg>
<div class="lgbg" style="left:174.40px;top:499.85px;width:243.50px;height:52.10px"></div>
<div class="sw" style="left:175.30px;top:501.05px;"><i style="background:#edc240"></i></div>
<div class="sw" style="left:175.30px;top:511.47px;"><i style="background:#afd8f8"></i></div>
<div class="sw" style="left:175.30px;top:521.89px;"><i style="background:#cb4b4b"></i></div>
<div class="sw" style="left:175.30px;top:532.31px;"><i style="background:#4da74d"></i></div>
<div class="sw" style="left:175.30px;top:542.73px;"><i style="background:#9440ed"></i></div>
<svg class="ic" style="left:646.60px;top:491.75px;color:#1a1a1a" width="8.00" height="7.90" viewBox="0 0 16 16" fill="#1a1a1a" stroke="none" preserveAspectRatio="none"><circle cx="6.900" cy="6.900" r="5.500" fill="none" stroke="currentColor" stroke-width="2.700"/><path d="M11.400 11.400L15 15" stroke="currentColor" stroke-width="2.900" stroke-linecap="round"/></svg>
<svg class="ic" style="left:646.90px;top:504.85px;color:#1a1a1a" width="7.00" height="6.90" viewBox="0 0 16 16" fill="#1a1a1a" stroke="none" preserveAspectRatio="none"><path d="M8.500 7.500V1.100l6.400 6.400zM7.500 8.500v6.400L1.100 8.500z"/><path d="M11.200 4.800L15.300.7M4.800 11.200L.7 15.300" stroke="currentColor" stroke-width="2.400" stroke-linecap="round"/></svg>
<svg class="ic" style="left:647.20px;top:519.15px;color:#1a1a1a" width="6.50" height="3.70" viewBox="0 0 16 9" fill="#1a1a1a" stroke="none" preserveAspectRatio="none"><path d="M0 0h16L8 9z"/></svg>
<div class="lgbg" style="left:700.60px;top:499.85px;width:61.50px;height:52.10px"></div>
<div class="sw" style="left:701.50px;top:501.05px;"><i style="background:#edc240"></i></div>
<div class="sw" style="left:701.50px;top:511.47px;"><i style="background:#afd8f8"></i></div>
<div class="sw" style="left:701.50px;top:521.89px;"><i style="background:#cb4b4b"></i></div>
<div class="sw" style="left:701.50px;top:532.31px;"><i style="background:#4da74d"></i></div>
<div class="sw" style="left:701.50px;top:542.73px;"><i style="background:#9440ed"></i></div>
<svg class="ic" style="left:1172.80px;top:491.75px;color:#1a1a1a" width="8.00" height="7.90" viewBox="0 0 16 16" fill="#1a1a1a" stroke="none" preserveAspectRatio="none"><circle cx="6.900" cy="6.900" r="5.500" fill="none" stroke="currentColor" stroke-width="2.700"/><path d="M11.400 11.400L15 15" stroke="currentColor" stroke-width="2.900" stroke-linecap="round"/></svg>
<svg class="ic" style="left:1173.10px;top:504.85px;color:#1a1a1a" width="7.00" height="6.90" viewBox="0 0 16 16" fill="#1a1a1a" stroke="none" preserveAspectRatio="none"><path d="M8.500 7.500V1.100l6.400 6.400zM7.500 8.500v6.400L1.100 8.500z"/><path d="M11.200 4.800L15.300.7M4.800 11.200L.7 15.300" stroke="currentColor" stroke-width="2.400" stroke-linecap="round"/></svg>
<svg class="ic" style="left:1173.40px;top:519.15px;color:#1a1a1a" width="6.50" height="3.70" viewBox="0 0 16 9" fill="#1a1a1a" stroke="none" preserveAspectRatio="none"><path d="M0 0h16L8 9z"/></svg>
<svg class="ic" style="left:970.50px;top:44.00px;color:#222" width="8.20" height="7.60" viewBox="0 0 16 15" fill="#222" stroke="none" preserveAspectRatio="none"><path d="M5.500 0h5v5h3.200L8 10.600 2.300 5h3.200z"/><path d="M0 10.400h3.600l2.200 2.100h4.400l2.200-2.100H16V15H0z"/></svg>
<svg class="ic" style="left:1087.00px;top:44.20px;color:#222" width="7.60" height="7.20" viewBox="0 0 16 14" fill="#222" stroke="none" preserveAspectRatio="none"><path d="M15.7 3.4c.3.4.4.9.2 1.4l-2.6 8.1c-.2.7-.9 1.1-1.6 1.1H3c-1 0-2-.8-2.4-1.800-.2-.5-.2-.9 0-1.300L3.300 2.700C3.600 1.500 4.600 0 5.800 0h8.300c.5 0 .9.200 1.100.500.300.400.300.900.200 1.400l-2.800 8.900c-.2.500-.5.700-1 .700H2.600c-.300 0-.500.100-.400.500.200.700.800.800 1.300.800h8.400c.300 0 .600-.200.700-.500l2.700-8.700c.1-.100.100-.300.100-.500.100.100.200.200.300.300z"/><g fill="#f8f8f8"><path d="M6.200 3.200h5.800l-.250.850H5.950zM5.650 5h5.800l-.250.850H5.400z"/></g></svg>
<svg class="ic" style="left:301.50px;top:66.00px;color:#337ab7" width="11.00" height="6.50" viewBox="0 0 18 11" fill="#337ab7" stroke="none" preserveAspectRatio="none"><path d="M1.5 1.5L9 9l7.5-7.5" fill="none" stroke="currentColor" stroke-width="2.6" stroke-linecap="round" stroke-linejoin="round"/></svg>
<svg class="ic" style="left:275.80px;top:255.20px;color:#337ab7" width="10.60" height="6.50" viewBox="0 0 18 11" fill="#337ab7" stroke="none" preserveAspectRatio="none"><path d="M1.5 1.5L9 9l7.5-7.5" fill="none" stroke="currentColor" stroke-width="2.6" stroke-linecap="round" stroke-linejoin="round"/></svg>
<svg class="ic" style="left:441.50px;top:284.20px;color:#337ab7" width="15.00" height="11.00" viewBox="0 0 16 12" fill="#337ab7" stroke="none" preserveAspectRatio="none"><circle cx="1.7" cy="1.7" r="1.7"/><circle cx="1.7" cy="6" r="1.7"/><circle cx="1.7" cy="10.3" r="1.7"/><rect x="4.8" y="0.5" width="11.2" height="2.4" rx=".4"/><rect x="4.8" y="4.8" width="11.2" height="2.4" rx=".4"/><rect x="4.8" y="9.1" width="11.2" height="2.4" rx=".4"/></svg>
<svg class="ic" style="left:977.30px;top:284.20px;color:#337ab7" width="15.00" height="11.00" viewBox="0 0 16 12" fill="#337ab7" stroke="none" preserveAspectRatio="none"><circle cx="1.7" cy="1.7" r="1.7"/><circle cx="1.7" cy="6" r="1.7"/><circle cx="1.7" cy="10.3" r="1.7"/><rect x="4.8" y="0.5" width="11.2" height="2.4" rx=".4"/><rect x="4.8" y="4.8" width="11.2" height="2.4" rx=".4"/><rect x="4.8" y="9.1" width="11.2" height="2.4" rx=".4"/></svg>
<svg class="ic" style="left:397.70px;top:470.00px;color:#337ab7" width="15.00" height="11.00" viewBox="0 0 16 12" fill="#337ab7" stroke="none" preserveAspectRatio="none"><circle cx="1.7" cy="1.7" r="1.7"/><circle cx="1.7" cy="6" r="1.7"/><circle cx="1.7" cy="10.3" r="1.7"/><rect x="4.8" y="0.5" width="11.2" height="2.4" rx=".4"/><rect x="4.8" y="4.8" width="11.2" height="2.4" rx=".4"/><rect x="4.8" y="9.1" width="11.2" height="2.4" rx=".4"/></svg>
<svg class="ic" style="left:952.20px;top:470.00px;color:#337ab7" width="15.00" height="11.00" viewBox="0 0 16 12" fill="#337ab7" stroke="none" preserveAspectRatio="none"><circle cx="1.7" cy="1.7" r="1.7"/><circle cx="1.7" cy="6" r="1.7"/><circle cx="1.7" cy="10.3" r="1.7"/><rect x="4.8" y="0.5" width="11.2" height="2.4" rx=".4"/><rect x="4.8" y="4.8" width="11.2" height="2.4" rx=".4"/><rect x="4.8" y="9.1" width="11.2" height="2.4" rx=".4"/></svg>
<span class="t" style="left:982.00px;top:42.18px;font-size:9.5px;line-height:12.35px;letter-spacing:0.177px;">Capture all traffic</span>
<span class="t" style="left:1097.75px;top:42.18px;font-size:9.5px;line-height:12.35px;letter-spacing:0.057px;">Manual</span>
<span class="t" style="left:1148.70px;top:42.68px;font-size:9.0px;line-height:11.7px;font-weight:700;color:#222;">?</span>
<span class="t" style="left:1156.75px;top:43.13px;font-size:8.55px;line-height:11.12px;letter-spacing:-0.285px;">FAQ</span>
<span class="t" style="left:147.00px;top:55.67px;font-size:20.4px;line-height:26.52px;letter-spacing:0.315px;">Traffic overview</span>
<span class="t" style="left:148.00px;top:245.57px;font-size:20.4px;line-height:26.52px;letter-spacing:0.209px;">Top statistics</span>
<span class="t" style="left:148.00px;top:279.46px;font-size:16.4px;line-height:21.32px;letter-spacing:0.214px;color:#337ab7;">Top sending IPs during the last minute</span>
<span class="t" style="left:674.00px;top:279.46px;font-size:16.4px;line-height:21.32px;letter-spacing:0.236px;color:#337ab7;">Top receiving IPs during the last minute</span>
<span class="t" style="left:148.00px;top:465.26px;font-size:16.4px;line-height:21.32px;letter-spacing:0.174px;color:#337ab7;">Top MACs during the last minute</span>
<span class="t" style="left:674.00px;top:465.26px;font-size:16.4px;line-height:21.32px;letter-spacing:0.317px;color:#337ab7;">Top protocols during the last minute</span>
<span class="t" style="left:678.75px;top:91.68px;font-size:9.6px;line-height:12.48px;font-weight:700;letter-spacing:0.470px;">Interface</span>
<span class="t" style="left:780.50px;top:91.78px;font-size:9.5px;line-height:12.35px;letter-spacing:0.053px;">Down</span>
<span class="t" style="left:678.75px;top:114.68px;font-size:9.4px;line-height:12.22px;font-weight:700;letter-spacing:0.385px;">Packet source</span>
<span class="t" style="left:780.50px;top:114.58px;font-size:9.5px;line-height:12.35px;letter-spacing:-0.242px;color:#337ab7;">PCAP file</span>
<span class="t" style="right:1031.10px;top:222.58px;font-size:7.7px;line-height:10.01px;color:#555;">0</span>
<span class="t" style="right:1031.10px;top:195.90px;font-size:7.7px;line-height:10.01px;color:#555;">5 M</span>
<span class="t" style="right:1031.10px;top:169.22px;font-size:7.7px;line-height:10.01px;color:#555;">10 M</span>
<span class="t" style="right:1031.10px;top:142.54px;font-size:7.7px;line-height:10.01px;color:#555;">15 M</span>
<span class="t" style="right:1031.10px;top:115.86px;font-size:7.7px;line-height:10.01px;color:#555;">20 M</span>
<span class="t" style="right:1031.10px;top:89.18px;font-size:7.7px;line-height:10.01px;color:#555;">25 M</span>
<span class="t" style="left:147.60px;top:230.28px;font-size:7.7px;line-height:10.01px;letter-spacing:0.289px;color:#555;">2017-05-09 15:23:30</span>
<span class="t" style="left:240.00px;top:230.28px;font-size:7.7px;line-height:10.01px;letter-spacing:0.191px;color:#555;">15:23:40</span>
<span class="t" style="left:316.00px;top:230.28px;font-size:7.7px;line-height:10.01px;letter-spacing:0.191px;color:#555;">15:23:50</span>
<span class="t" style="left:392.00px;top:230.28px;font-size:7.7px;line-height:10.01px;letter-spacing:0.191px;color:#555;">15:24:00</span>
<span class="t" style="left:468.00px;top:230.28px;font-size:7.7px;line-height:10.01px;letter-spacing:0.191px;color:#555;">15:24:10</span>
<span class="t" style="left:544.00px;top:230.28px;font-size:7.7px;line-height:10.01px;letter-spacing:0.191px;color:#555;">15:24:20</span>
<span class="t" style="left:184.00px;top:96.68px;font-size:7.7px;line-height:10.01px;letter-spacing:0.181px;color:#505050;">processed bit/s</span>
<span class="t" style="right:1031.10px;top:440.83px;font-size:7.7px;line-height:10.01px;color:#555;">0</span>
<span class="t" style="right:1031.10px;top:414.15px;font-size:7.7px;line-height:10.01px;color:#555;">5 M</span>
<span class="t" style="right:1031.10px;top:387.47px;font-size:7.7px;line-height:10.01px;color:#555;">10 M</span>
<span class="t" style="right:1031.10px;top:360.79px;font-size:7.7px;line-height:10.01px;color:#555;">15 M</span>
<span class="t" style="right:1031.10px;top:334.11px;font-size:7.7px;line-height:10.01px;color:#555;">20 M</span>
<span class="t" style="right:1031.10px;top:307.43px;font-size:7.7px;line-height:10.01px;color:#555;">25 M</span>
<span class="t" style="left:147.60px;top:448.53px;font-size:7.7px;line-height:10.01px;letter-spacing:0.289px;color:#555;">2017-05-09 15:23:30</span>
<span class="t" style="left:240.00px;top:448.53px;font-size:7.7px;line-height:10.01px;letter-spacing:0.191px;color:#555;">15:23:40</span>
<span class="t" style="left:316.00px;top:448.53px;font-size:7.7px;line-height:10.01px;letter-spacing:0.191px;color:#555;">15:23:50</span>
<span class="t" style="left:392.00px;top:448.53px;font-size:7.7px;line-height:10.01px;letter-spacing:0.191px;color:#555;">15:24:00</span>
<span class="t" style="left:468.00px;top:448.53px;font-size:7.7px;line-height:10.01px;letter-spacing:0.191px;color:#555;">15:24:10</span>
<span class="t" style="left:544.00px;top:448.53px;font-size:7.7px;line-height:10.01px;letter-spacing:0.191px;color:#555;">15:24:20</span>
<span class="t" style="left:184.00px;top:314.93px;font-size:7.7px;line-height:10.01px;letter-spacing:0.247px;color:#505050;">10.54.0.14 bit/s</span>
<span class="t" style="left:184.00px;top:325.35px;font-size:7.7px;line-height:10.01px;letter-spacing:0.247px;color:#505050;">10.54.0.15 bit/s</span>
<span class="t" style="left:184.00px;top:335.77px;font-size:7.7px;line-height:10.01px;letter-spacing:0.246px;color:#505050;">68.183.161.145 bit/s</span>
<span class="t" style="right:504.90px;top:440.83px;font-size:7.7px;line-height:10.01px;color:#555;">0</span>
<span class="t" style="right:504.90px;top:414.15px;font-size:7.7px;line-height:10.01px;color:#555;">5 M</span>
<span class="t" style="right:504.90px;top:387.47px;font-size:7.7px;line-height:10.01px;color:#555;">10 M</span>
<span class="t" style="right:504.90px;top:360.79px;font-size:7.7px;line-height:10.01px;color:#555;">15 M</span>
<span class="t" style="right:504.90px;top:334.11px;font-size:7.7px;line-height:10.01px;color:#555;">20 M</span>
<span class="t" style="right:504.90px;top:307.43px;font-size:7.7px;line-height:10.01px;color:#555;">25 M</span>
<span class="t" style="left:673.80px;top:448.53px;font-size:7.7px;line-height:10.01px;letter-spacing:0.289px;color:#555;">2017-05-09 15:23:30</span>
<span class="t" style="left:766.20px;top:448.53px;font-size:7.7px;line-height:10.01px;letter-spacing:0.191px;color:#555;">15:23:40</span>
<span class="t" style="left:842.20px;top:448.53px;font-size:7.7px;line-height:10.01px;letter-spacing:0.191px;color:#555;">15:23:50</span>
<span class="t" style="left:918.20px;top:448.53px;font-size:7.7px;line-height:10.01px;letter-spacing:0.191px;color:#555;">15:24:00</span>
<span class="t" style="left:994.20px;top:448.53px;font-size:7.7px;line-height:10.01px;letter-spacing:0.191px;color:#555;">15:24:10</span>
<span class="t" style="left:1070.20px;top:448.53px;font-size:7.7px;line-height:10.01px;letter-spacing:0.191px;color:#555;">15:24:20</span>
<span class="t" style="left:710.20px;top:314.93px;font-size:7.7px;line-height:10.01px;letter-spacing:0.247px;color:#505050;">10.54.0.15 bit/s</span>
<span class="t" style="left:710.20px;top:325.35px;font-size:7.7px;line-height:10.01px;letter-spacing:0.247px;color:#505050;">10.54.0.14 bit/s</span>
<span class="t" style="left:710.20px;top:335.77px;font-size:7.7px;line-height:10.01px;letter-spacing:0.246px;color:#505050;">68.183.161.145 bit/s</span>
<span class="t" style="right:1031.10px;top:626.33px;font-size:7.7px;line-height:10.01px;color:#555;">0</span>
<span class="t" style="right:1031.10px;top:599.65px;font-size:7.7px;line-height:10.01px;color:#555;">5 M</span>
<span class="t" style="right:1031.10px;top:572.97px;font-size:7.7px;line-height:10.01px;color:#555;">10 M</span>
<span class="t" style="right:1031.10px;top:546.29px;font-size:7.7px;line-height:10.01px;color:#555;">15 M</span>
<span class="t" style="right:1031.10px;top:519.61px;font-size:7.7px;line-height:10.01px;color:#555;">20 M</span>
<span class="t" style="right:1031.10px;top:492.93px;font-size:7.7px;line-height:10.01px;color:#555;">25 M</span>
<span class="t" style="left:147.60px;top:634.03px;font-size:7.7px;line-height:10.01px;letter-spacing:0.289px;color:#555;">2017-05-09 15:23:30</span>
<span class="t" style="left:240.00px;top:634.03px;font-size:7.7px;line-height:10.01px;letter-spacing:0.191px;color:#555;">15:23:40</span>
<span class="t" style="left:316.00px;top:634.03px;font-size:7.7px;line-height:10.01px;letter-spacing:0.191px;color:#555;">15:23:50</span>
<span class="t" style="left:392.00px;top:634.03px;font-size:7.7px;line-height:10.01px;letter-spacing:0.191px;color:#555;">15:24:00</span>
<span class="t" style="left:468.00px;top:634.03px;font-size:7.7px;line-height:10.01px;letter-spacing:0.191px;color:#555;">15:24:10</span>
<span class="t" style="left:544.00px;top:634.03px;font-size:7.7px;line-height:10.01px;letter-spacing:0.191px;color:#555;">15:24:20</span>
<span class="t" style="left:184.00px;top:500.43px;font-size:7.7px;line-height:10.01px;letter-spacing:0.269px;color:#505050;">00:11:32:2f:3d:a1 (Synology Incorporated) bit/s</span>
<span class="t" style="left:184.00px;top:510.85px;font-size:7.7px;line-height:10.01px;letter-spacing:0.269px;color:#505050;">00:11:32:ae:13:f1 (Synology Incorporated) bit/s</span>
<span class="t" style="left:184.00px;top:521.27px;font-size:7.7px;line-height:10.01px;letter-spacing:0.270px;color:#505050;">01:80:c2:00:00:0e (multicast address) bit/s</span>
<span class="t" style="left:184.00px;top:531.69px;font-size:7.7px;line-height:10.01px;letter-spacing:0.188px;color:#505050;">00:0b:ab:7f:b3:97 (Advantech Technology (CHINA) Co. Ltd.) bit/s</span>
<span class="t" style="left:184.00px;top:542.11px;font-size:7.7px;line-height:10.01px;letter-spacing:0.214px;color:#505050;">ac:1f:6b:09:cc:28 (Super Micro Computer Inc.) bit/s</span>
<span class="t" style="right:504.90px;top:626.33px;font-size:7.7px;line-height:10.01px;color:#555;">0</span>
<span class="t" style="right:504.90px;top:599.65px;font-size:7.7px;line-height:10.01px;color:#555;">5 M</span>
<span class="t" style="right:504.90px;top:572.97px;font-size:7.7px;line-height:10.01px;color:#555;">10 M</span>
<span class="t" style="right:504.90px;top:546.29px;font-size:7.7px;line-height:10.01px;color:#555;">15 M</span>
<span class="t" style="right:504.90px;top:519.61px;font-size:7.7px;line-height:10.01px;color:#555;">20 M</span>
<span class="t" style="right:504.90px;top:492.93px;font-size:7.7px;line-height:10.01px;color:#555;">25 M</span>
<span class="t" style="left:673.80px;top:634.03px;font-size:7.7px;line-height:10.01px;letter-spacing:0.289px;color:#555;">2017-05-09 15:23:30</span>
<span class="t" style="left:766.20px;top:634.03px;font-size:7.7px;line-height:10.01px;letter-spacing:0.191px;color:#555;">15:23:40</span>
<span class="t" style="left:842.20px;top:634.03px;font-size:7.7px;line-height:10.01px;letter-spacing:0.191px;color:#555;">15:23:50</span>
<span class="t" style="left:918.20px;top:634.03px;font-size:7.7px;line-height:10.01px;letter-spacing:0.191px;color:#555;">15:24:00</span>
<span class="t" style="left:994.20px;top:634.03px;font-size:7.7px;line-height:10.01px;letter-spacing:0.191px;color:#555;">15:24:10</span>
<span class="t" style="left:1070.20px;top:634.03px;font-size:7.7px;line-height:10.01px;letter-spacing:0.191px;color:#555;">15:24:20</span>
<span class="t" style="left:710.20px;top:500.43px;font-size:7.7px;line-height:10.01px;letter-spacing:0.241px;color:#505050;">Unknown bit/s</span>
<span class="t" style="left:710.20px;top:510.85px;font-size:7.7px;line-height:10.01px;letter-spacing:0.076px;color:#505050;">DNS bit/s</span>
<span class="t" style="left:710.20px;top:521.27px;font-size:7.7px;line-height:10.01px;letter-spacing:0.007px;color:#505050;">HTTP bit/s</span>
<span class="t" style="left:710.20px;top:531.69px;font-size:7.7px;line-height:10.01px;letter-spacing:0.067px;color:#505050;">MDNS bit/s</span>
<span class="t" style="left:710.20px;top:542.11px;font-size:7.7px;line-height:10.01px;letter-spacing:0.053px;color:#505050;">NTP bit/s</span>
</main>
</body></html>
